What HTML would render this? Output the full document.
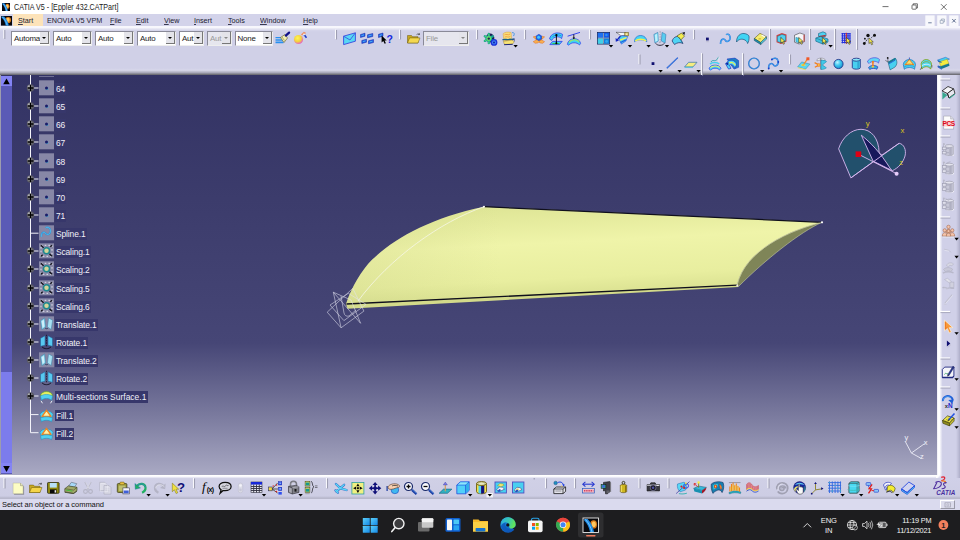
<!DOCTYPE html><html><head><meta charset="utf-8"><title>CATIA V5 - [Eppler 432.CATPart]</title><style>
*{margin:0;padding:0;box-sizing:border-box}
html,body{width:960px;height:540px;overflow:hidden;background:#d2d2e8;font-family:"Liberation Sans",sans-serif;}
.a{position:absolute}
#title{left:0;top:0;width:960px;height:15px;background:#fff}
#title .t{left:14px;top:2.2px;font-size:8.3px;color:#222;white-space:nowrap;transform:scaleX(0.86);transform-origin:0 0}
#menu{left:0;top:14.4px;width:960px;height:12px;background:#d3d3ea}
#menu span{position:absolute;top:1.7px;font-size:8px;color:#1a1a30;white-space:nowrap;transform:scaleX(0.9);transform-origin:0 0}
#menu span u{text-decoration-thickness:0.55px;text-underline-offset:0.6px;text-decoration-color:#3a3a52}
#tb{left:0;top:25.8px;width:960px;height:49.7px;background:linear-gradient(#f4f4fb 0,#fbfbfe 1.2px,#e6e6f3 2.8px,#d3d3e9 4.6px,#d0d0e7 6px,#d0d0e7 42.2px,#d8d8ea 44.2px,#a8a8b8 46.7px,#707078 48.5px,#50505e 49.7px)}
#vp{left:0;top:75px;width:936.5px;height:400px;background:linear-gradient(#333364 0,#3c3c6c 31%,#464676 67%,#7a7a9e 85%,#a9a9c3 100%);overflow:hidden}
#sb{left:1.2px;top:75.5px;width:10.8px;height:398px;background:#5a5ab6}
#rt{left:936.5px;top:75px;width:24px;height:424px;background:linear-gradient(90deg,#e8e8f2 0,#fff 1px,#fff 2.6px,#e4e4f2 4.2px,#d0d0e8 5.6px,#d0d0e8 19px,#b8b8d2 22px,#a0a0bc 24px)}
#bt{left:0;top:475px;width:938px;height:23.5px;background:linear-gradient(#fff 0,#fff 1.2px,#e8e8f4 2.4px,#d0d0e6 3.6px,#cdcde4 21px,#b8b8cc 23px)}
#bt2{left:938px;top:478px;width:22px;height:20.5px;background:linear-gradient(#d0d0e8 0,#cdcde4 18px,#b8b8cc 20px)}
#st{left:0;top:498.5px;width:960px;height:11.5px;background:#dadaee}
#st .t{left:2px;top:1.3px;font-size:7.5px;color:#111;white-space:nowrap;letter-spacing:-0.05px}
#task{left:0;top:510px;width:960px;height:30px;background:#1d1d1f}
.cb{position:absolute;top:31px;height:14.5px;background:#fff;border:1px solid #8a8a98;border-right-color:#eee;border-bottom-color:#eee;font-size:7.9px;color:#222;line-height:13.6px;padding-left:2px;overflow:hidden;white-space:nowrap;letter-spacing:-0.2px}
.cb i{position:absolute;right:0;top:0;width:9px;height:12px;background:#e4e4ea;border-right:1px solid #777;border-bottom:1px solid #777}
.cb i:after{content:"";position:absolute;left:2.2px;top:5px;border:2px solid transparent;border-top:2.5px solid #000}
.cb.d{background:#e6e6ee;color:#999}
.cb.d i:after{border-top-color:#888}
.sep{position:absolute;width:2px;background:linear-gradient(90deg,#fff 0,#fff 50%,#a8a8ba 50%)}
.tr{position:absolute;left:0;height:18px;white-space:nowrap}
.tr .lb{position:absolute;left:54.7px;top:4px;height:11.8px;padding:0 1.2px;font-size:8.45px;line-height:13.3px;color:#f0f0f8;background:#37376b;letter-spacing:-0.1px}
</style></head><body>
<div id="title" class="a"><div class="a t">CATIA V5 - [Eppler 432.CATPart]</div>
<svg class="a" style="left:1.8px;top:3px" width="8.4" height="8" viewBox="0 0 10 10" preserveAspectRatio="none"><rect width="10" height="10" fill="#08080e"/><ellipse cx="6.4" cy="4.2" rx="2.6" ry="3.2" fill="#d87818"/><ellipse cx="6.2" cy="4" rx="1.5" ry="2.2" fill="#ffc860"/><path d="M0.4 0.4L2.8 0.4C5 3 6.6 6.4 7 10L4.2 10C3.8 6.6 2.4 3.4 0.4 1.6Z" fill="#2088e0"/><path d="M1.2 0.8C3.4 3.4 5 6.6 5.6 10" stroke="#70c8ff" stroke-width="0.8" fill="none"/></svg>
<svg class="a" style="left:880px;top:0" width="80" height="15" viewBox="0 0 80 15" fill="none" stroke="#333" stroke-width="0.7"><path d="M2.5 6.6h6"/><rect x="32" y="5" width="4.2" height="4.2" rx="0.6"/><path d="M33.2 5v-1.2h4.2v4.2h-1.2"/><path d="M61 4.2l5.6 5.6M66.6 4.2l-5.6 5.6"/></svg>
</div>
<div id="menu" class="a">
<div class="a" style="left:13px;top:0;width:30px;height:12px;background:#fde3b9"></div>
<svg class="a" style="left:1px;top:1.6px" width="11.2" height="9.6" viewBox="0 0 10 10" preserveAspectRatio="none"><rect width="10" height="10" fill="#08080e"/><ellipse cx="6.4" cy="4.2" rx="2.6" ry="3.2" fill="#d87818"/><ellipse cx="6.2" cy="4" rx="1.5" ry="2.2" fill="#ffc860"/><path d="M0.4 0.4L2.8 0.4C5 3 6.6 6.4 7 10L4.2 10C3.8 6.6 2.4 3.4 0.4 1.6Z" fill="#2088e0"/><path d="M1.2 0.8C3.4 3.4 5 6.6 5.6 10" stroke="#70c8ff" stroke-width="0.8" fill="none"/></svg>
<span style="left:18px"><u>S</u>tart</span>
<span style="left:47px">ENOVIA V5 VPM</span>
<span style="left:110px"><u>F</u>ile</span>
<span style="left:136px"><u>E</u>dit</span>
<span style="left:164px"><u>V</u>iew</span>
<span style="left:194px"><u>I</u>nsert</span>
<span style="left:228px"><u>T</u>ools</span>
<span style="left:260px"><u>W</u>indow</span>
<span style="left:303px"><u>H</u>elp</span>
<svg class="a" style="left:925px;top:0.5px" width="35" height="12" viewBox="0 0 35 12"><rect x="0.3" y="0.4" width="9.3" height="11" fill="#f8f8fc"/><rect x="12.2" y="0.4" width="9.3" height="11" fill="#f8f8fc"/><rect x="24.2" y="0.4" width="9.3" height="11" fill="#f8f8fc"/><path d="M3.2 7.8h3.5" stroke="#7080a0" stroke-width="1"/><path d="M15.2 5.3h3v3h-3zM16.4 5.3v-1.3h3v3h-1.2" stroke="#8090a8" stroke-width="0.6" fill="none"/><path d="M27.2 4l3.5 3.5M30.7 4l-3.5 3.5" stroke="#607090" stroke-width="1"/></svg>
</div>
<div id="vp" class="a">
<svg class="a" style="left:0;top:0" width="936" height="400" viewBox="0 75 936 400">
<defs><linearGradient id="wg" x1="0" y1="0" x2="0.25" y2="1"><stop offset="0" stop-color="#dbe292"/><stop offset="0.45" stop-color="#eff4a9"/><stop offset="0.8" stop-color="#e8ee9f"/><stop offset="1" stop-color="#d8df8f"/></linearGradient><linearGradient id="wg2" gradientUnits="userSpaceOnUse" x1="346" y1="0" x2="500" y2="0"><stop offset="0" stop-color="#c8cf88" stop-opacity="0.3"/><stop offset="1" stop-color="#c8cf88" stop-opacity="0"/></linearGradient></defs>
<path d="M346 304 L737 285 L738.5 287 L540 298 L347.5 308.8Z" fill="#d3da8a"/>
<path d="M822 222.3 C790 230 745 250 737 285.2 L738.5 286.5 C765 260 800 232 822 222.3Z" fill="#7f8558" stroke="#d8dcae" stroke-width="0.5"/>
<path d="M346 304 C352 286 362 270 372 259.8 C395 238 430 218 484 206.7 L822 222.3 C790 230 745 250 737 285.2 Z" fill="url(#wg)"/>
<path d="M346 304 C352 286 362 270 372 259.8 C395 238 430 218 484 206.7 L822 222.3 C790 230 745 250 737 285.2 Z" fill="url(#wg2)"/>
<path d="M484 206.7 L822 222.3" stroke="#10101c" stroke-width="1.3" fill="none"/>
<path d="M346.5 304 L737 285.2" stroke="#10101c" stroke-width="1.3" fill="none"/>
<path d="M822 222.3 C790 230 745 250 737 285.2" stroke="#c4c89c" stroke-width="0.6" fill="none"/>
<path d="M484 206.7 C440 222 390 258 358 301" stroke="#f8f8f0" stroke-width="0.8" fill="none" opacity="0.9"/>
<circle cx="484" cy="206.7" r="1" fill="#fff"/><circle cx="822" cy="222.3" r="1.1" fill="#fff"/><circle cx="737.3" cy="285.5" r="1" fill="#eee"/>
<g stroke="#e4e4f2" stroke-width="0.65" fill="none" opacity="0.85"><path d="M327.2 312.2L352.8 288.3L363.9 311.1L341.1 327.8Z"/><path d="M330 305L348.3 293.3L366.1 304.4L343.9 320.6Z"/><path d="M333.3 292.2L360.6 323.3L351 300L333.3 292.2L341.1 327.8"/><path d="M341 296L344 313Q345 317 349 316L356 310"/></g>
<g stroke="#d8b8f0" stroke-width="0.9" stroke-linejoin="round">
<path d="M850.9 177.9 L838.6 148.8 C842 138 851 129.3 861 129.3 C871 129.3 879 138 879.1 153 L882 155.2 Z" fill="#22506c"/>
<path d="M873.1 161.1 L899.1 143.3 C904 144 906.5 150 905 156 C903 163 898 168 892.4 170.7 Z" fill="#22506c"/>
<path d="M861.3 135.2 C870 142 880 152 890.6 169 L892.4 170.7 L873.1 161.1 Z" fill="#18185c"/>
<path d="M850.9 177.9 L899.1 143.3 M858.3 154.1 L896.6 173.7" fill="none"/>
</g>
<rect x="855.6" y="151.4" width="5.6" height="5.6" fill="#e00014"/>
<circle cx="896.6" cy="173.7" r="2" fill="#e6ccfa"/>
<g font-family="Liberation Sans, sans-serif" font-size="7.8" fill="#d8c21c"><text x="865.8" y="126">y</text><text x="900.4" y="132.6">x</text><text x="899.2" y="165">z</text></g>
<g stroke="#ececf6" stroke-width="0.9" fill="none"><path d="M905.3 441.5 L911.4 453 L924.5 443.7 M911.4 453 L920.8 458.2"/></g>
<g font-family="Liberation Sans, sans-serif" font-size="7.5" fill="#f0f0f8"><text x="904.6" y="440">y</text><text x="923.7" y="445.3">x</text><text x="920" y="458.5">z</text></g>
<path d="M30.5 75 V432.7 H38.5 M30.5 414.6 H38.5 M30.5 233.2 H38.5" stroke="#f4f4fa" stroke-width="1" fill="none"/>
</svg>
<div class="a" style="left:39px;top:0.6px;width:15px;height:1.3px;background:#8787a6;opacity:0.7"></div>
<div class="tr" style="top:4.00px">
<svg class="a" style="left:26px;top:1px" width="30" height="16" viewBox="26 -8 30 16"><path d="M30.5 0H38.5" stroke="#f4f4fa" stroke-width="1"/><circle cx="30.5" cy="0" r="3.7" fill="#5c5c66"/><circle cx="29.9" cy="-0.7" r="2.6" fill="#8a8a94"/><circle cx="29.4" cy="-1.3" r="1.3" fill="#b4b4bc"/><path d="M27.6 0H33.4M30.5 -2.9V2.9" stroke="#000" stroke-width="1.3"/><g transform="translate(39,-7.7)"><rect x="0" y="0" width="15" height="15" fill="#8787a6"/><circle cx="7.9" cy="8.1" r="1.5" fill="#48a0c8"/><circle cx="7.5" cy="7.7" r="1.5" fill="#1c1c68"/></g></svg>
<span class="lb">64</span></div>
<div class="tr" style="top:22.14px">
<svg class="a" style="left:26px;top:1px" width="30" height="16" viewBox="26 -8 30 16"><path d="M30.5 0H38.5" stroke="#f4f4fa" stroke-width="1"/><circle cx="30.5" cy="0" r="3.7" fill="#5c5c66"/><circle cx="29.9" cy="-0.7" r="2.6" fill="#8a8a94"/><circle cx="29.4" cy="-1.3" r="1.3" fill="#b4b4bc"/><path d="M27.6 0H33.4M30.5 -2.9V2.9" stroke="#000" stroke-width="1.3"/><g transform="translate(39,-7.7)"><rect x="0" y="0" width="15" height="15" fill="#8787a6"/><circle cx="7.9" cy="8.1" r="1.5" fill="#48a0c8"/><circle cx="7.5" cy="7.7" r="1.5" fill="#1c1c68"/></g></svg>
<span class="lb">65</span></div>
<div class="tr" style="top:40.29px">
<svg class="a" style="left:26px;top:1px" width="30" height="16" viewBox="26 -8 30 16"><path d="M30.5 0H38.5" stroke="#f4f4fa" stroke-width="1"/><circle cx="30.5" cy="0" r="3.7" fill="#5c5c66"/><circle cx="29.9" cy="-0.7" r="2.6" fill="#8a8a94"/><circle cx="29.4" cy="-1.3" r="1.3" fill="#b4b4bc"/><path d="M27.6 0H33.4M30.5 -2.9V2.9" stroke="#000" stroke-width="1.3"/><g transform="translate(39,-7.7)"><rect x="0" y="0" width="15" height="15" fill="#8787a6"/><circle cx="7.9" cy="8.1" r="1.5" fill="#48a0c8"/><circle cx="7.5" cy="7.7" r="1.5" fill="#1c1c68"/></g></svg>
<span class="lb">66</span></div>
<div class="tr" style="top:58.44px">
<svg class="a" style="left:26px;top:1px" width="30" height="16" viewBox="26 -8 30 16"><path d="M30.5 0H38.5" stroke="#f4f4fa" stroke-width="1"/><circle cx="30.5" cy="0" r="3.7" fill="#5c5c66"/><circle cx="29.9" cy="-0.7" r="2.6" fill="#8a8a94"/><circle cx="29.4" cy="-1.3" r="1.3" fill="#b4b4bc"/><path d="M27.6 0H33.4M30.5 -2.9V2.9" stroke="#000" stroke-width="1.3"/><g transform="translate(39,-7.7)"><rect x="0" y="0" width="15" height="15" fill="#8787a6"/><circle cx="7.9" cy="8.1" r="1.5" fill="#48a0c8"/><circle cx="7.5" cy="7.7" r="1.5" fill="#1c1c68"/></g></svg>
<span class="lb">67</span></div>
<div class="tr" style="top:76.58px">
<svg class="a" style="left:26px;top:1px" width="30" height="16" viewBox="26 -8 30 16"><path d="M30.5 0H38.5" stroke="#f4f4fa" stroke-width="1"/><circle cx="30.5" cy="0" r="3.7" fill="#5c5c66"/><circle cx="29.9" cy="-0.7" r="2.6" fill="#8a8a94"/><circle cx="29.4" cy="-1.3" r="1.3" fill="#b4b4bc"/><path d="M27.6 0H33.4M30.5 -2.9V2.9" stroke="#000" stroke-width="1.3"/><g transform="translate(39,-7.7)"><rect x="0" y="0" width="15" height="15" fill="#8787a6"/><circle cx="7.9" cy="8.1" r="1.5" fill="#48a0c8"/><circle cx="7.5" cy="7.7" r="1.5" fill="#1c1c68"/></g></svg>
<span class="lb">68</span></div>
<div class="tr" style="top:94.72px">
<svg class="a" style="left:26px;top:1px" width="30" height="16" viewBox="26 -8 30 16"><path d="M30.5 0H38.5" stroke="#f4f4fa" stroke-width="1"/><circle cx="30.5" cy="0" r="3.7" fill="#5c5c66"/><circle cx="29.9" cy="-0.7" r="2.6" fill="#8a8a94"/><circle cx="29.4" cy="-1.3" r="1.3" fill="#b4b4bc"/><path d="M27.6 0H33.4M30.5 -2.9V2.9" stroke="#000" stroke-width="1.3"/><g transform="translate(39,-7.7)"><rect x="0" y="0" width="15" height="15" fill="#8787a6"/><circle cx="7.9" cy="8.1" r="1.5" fill="#48a0c8"/><circle cx="7.5" cy="7.7" r="1.5" fill="#1c1c68"/></g></svg>
<span class="lb">69</span></div>
<div class="tr" style="top:112.87px">
<svg class="a" style="left:26px;top:1px" width="30" height="16" viewBox="26 -8 30 16"><path d="M30.5 0H38.5" stroke="#f4f4fa" stroke-width="1"/><circle cx="30.5" cy="0" r="3.7" fill="#5c5c66"/><circle cx="29.9" cy="-0.7" r="2.6" fill="#8a8a94"/><circle cx="29.4" cy="-1.3" r="1.3" fill="#b4b4bc"/><path d="M27.6 0H33.4M30.5 -2.9V2.9" stroke="#000" stroke-width="1.3"/><g transform="translate(39,-7.7)"><rect x="0" y="0" width="15" height="15" fill="#8787a6"/><circle cx="7.9" cy="8.1" r="1.5" fill="#48a0c8"/><circle cx="7.5" cy="7.7" r="1.5" fill="#1c1c68"/></g></svg>
<span class="lb">70</span></div>
<div class="tr" style="top:131.01px">
<svg class="a" style="left:26px;top:1px" width="30" height="16" viewBox="26 -8 30 16"><path d="M30.5 0H38.5" stroke="#f4f4fa" stroke-width="1"/><circle cx="30.5" cy="0" r="3.7" fill="#5c5c66"/><circle cx="29.9" cy="-0.7" r="2.6" fill="#8a8a94"/><circle cx="29.4" cy="-1.3" r="1.3" fill="#b4b4bc"/><path d="M27.6 0H33.4M30.5 -2.9V2.9" stroke="#000" stroke-width="1.3"/><g transform="translate(39,-7.7)"><rect x="0" y="0" width="15" height="15" fill="#8787a6"/><circle cx="7.9" cy="8.1" r="1.5" fill="#48a0c8"/><circle cx="7.5" cy="7.7" r="1.5" fill="#1c1c68"/></g></svg>
<span class="lb">71</span></div>
<div class="tr" style="top:149.16px">
<svg class="a" style="left:26px;top:1px" width="30" height="16" viewBox="26 -8 30 16"><g transform="translate(39,-7.7)"><rect x="0" y="0" width="15" height="15" fill="#8787a6"/><path d="M2.4 11.6C2 6.6 5.4 6 6.8 8.2C8.2 10.6 12.2 8.6 11.4 4.6C10.8 2 8 1.4 6.6 2.6" stroke="#2890d8" stroke-width="1.5" fill="none"/><path d="M2.4 11.6C2 6.6 5.4 6 6.8 8.2C8.2 10.6 12.2 8.6 11.4 4.6C10.8 2 8 1.4 6.6 2.6" stroke="#70d8f4" stroke-width="0.5" fill="none"/></g></svg>
<span class="lb">Spline.1</span></div>
<div class="tr" style="top:167.31px">
<svg class="a" style="left:26px;top:1px" width="30" height="16" viewBox="26 -8 30 16"><path d="M30.5 0H38.5" stroke="#f4f4fa" stroke-width="1"/><circle cx="30.5" cy="0" r="3.7" fill="#5c5c66"/><circle cx="29.9" cy="-0.7" r="2.6" fill="#8a8a94"/><circle cx="29.4" cy="-1.3" r="1.3" fill="#b4b4bc"/><path d="M27.6 0H33.4M30.5 -2.9V2.9" stroke="#000" stroke-width="1.3"/><g transform="translate(39,-7.7)"><rect x="0" y="0" width="15" height="15" fill="#8787a6"/><path d="M2 2H13V13H2Z" fill="none" stroke="#eeeef6" stroke-width="0.9" stroke-dasharray="1.6 2.1"/><path d="M2 2L4.6 4.6M13 13L10.4 10.4M13 2L11.4 3.6M2 13L3.6 11.4" stroke="#101018" stroke-width="1.3"/><circle cx="7.5" cy="7.5" r="3" fill="#d4d69a" stroke="#1c8890" stroke-width="1.5"/></g></svg>
<span class="lb">Scaling.1</span></div>
<div class="tr" style="top:185.45px">
<svg class="a" style="left:26px;top:1px" width="30" height="16" viewBox="26 -8 30 16"><path d="M30.5 0H38.5" stroke="#f4f4fa" stroke-width="1"/><circle cx="30.5" cy="0" r="3.7" fill="#5c5c66"/><circle cx="29.9" cy="-0.7" r="2.6" fill="#8a8a94"/><circle cx="29.4" cy="-1.3" r="1.3" fill="#b4b4bc"/><path d="M27.6 0H33.4M30.5 -2.9V2.9" stroke="#000" stroke-width="1.3"/><g transform="translate(39,-7.7)"><rect x="0" y="0" width="15" height="15" fill="#8787a6"/><path d="M2 2H13V13H2Z" fill="none" stroke="#eeeef6" stroke-width="0.9" stroke-dasharray="1.6 2.1"/><path d="M2 2L4.6 4.6M13 13L10.4 10.4M13 2L11.4 3.6M2 13L3.6 11.4" stroke="#101018" stroke-width="1.3"/><circle cx="7.5" cy="7.5" r="3" fill="#d4d69a" stroke="#1c8890" stroke-width="1.5"/></g></svg>
<span class="lb">Scaling.2</span></div>
<div class="tr" style="top:203.60px">
<svg class="a" style="left:26px;top:1px" width="30" height="16" viewBox="26 -8 30 16"><path d="M30.5 0H38.5" stroke="#f4f4fa" stroke-width="1"/><circle cx="30.5" cy="0" r="3.7" fill="#5c5c66"/><circle cx="29.9" cy="-0.7" r="2.6" fill="#8a8a94"/><circle cx="29.4" cy="-1.3" r="1.3" fill="#b4b4bc"/><path d="M27.6 0H33.4M30.5 -2.9V2.9" stroke="#000" stroke-width="1.3"/><g transform="translate(39,-7.7)"><rect x="0" y="0" width="15" height="15" fill="#8787a6"/><path d="M2 2H13V13H2Z" fill="none" stroke="#eeeef6" stroke-width="0.9" stroke-dasharray="1.6 2.1"/><path d="M2 2L4.6 4.6M13 13L10.4 10.4M13 2L11.4 3.6M2 13L3.6 11.4" stroke="#101018" stroke-width="1.3"/><circle cx="7.5" cy="7.5" r="3" fill="#d4d69a" stroke="#1c8890" stroke-width="1.5"/></g></svg>
<span class="lb">Scaling.5</span></div>
<div class="tr" style="top:221.74px">
<svg class="a" style="left:26px;top:1px" width="30" height="16" viewBox="26 -8 30 16"><path d="M30.5 0H38.5" stroke="#f4f4fa" stroke-width="1"/><circle cx="30.5" cy="0" r="3.7" fill="#5c5c66"/><circle cx="29.9" cy="-0.7" r="2.6" fill="#8a8a94"/><circle cx="29.4" cy="-1.3" r="1.3" fill="#b4b4bc"/><path d="M27.6 0H33.4M30.5 -2.9V2.9" stroke="#000" stroke-width="1.3"/><g transform="translate(39,-7.7)"><rect x="0" y="0" width="15" height="15" fill="#8787a6"/><path d="M2 2H13V13H2Z" fill="none" stroke="#eeeef6" stroke-width="0.9" stroke-dasharray="1.6 2.1"/><path d="M2 2L4.6 4.6M13 13L10.4 10.4M13 2L11.4 3.6M2 13L3.6 11.4" stroke="#101018" stroke-width="1.3"/><circle cx="7.5" cy="7.5" r="3" fill="#d4d69a" stroke="#1c8890" stroke-width="1.5"/></g></svg>
<span class="lb">Scaling.6</span></div>
<div class="tr" style="top:239.88px">
<svg class="a" style="left:26px;top:1px" width="30" height="16" viewBox="26 -8 30 16"><path d="M30.5 0H38.5" stroke="#f4f4fa" stroke-width="1"/><circle cx="30.5" cy="0" r="3.7" fill="#5c5c66"/><circle cx="29.9" cy="-0.7" r="2.6" fill="#8a8a94"/><circle cx="29.4" cy="-1.3" r="1.3" fill="#b4b4bc"/><path d="M27.6 0H33.4M30.5 -2.9V2.9" stroke="#000" stroke-width="1.3"/><g transform="translate(39,-7.7)"><rect x="0" y="0" width="15" height="15" fill="#8787a6"/><path d="M1.6 4.4L5.6 1.6L6.6 10.6L3 13.4Z" fill="#8cd8ee" stroke="#3880a8" stroke-width="0.5"/><path d="M2.6 5L4.8 3.4L5.4 10L3.6 11.6Z" fill="#d0f0fa"/><path d="M9.6 1.6L13.6 4L12.2 13.2L8.4 10.6Z" fill="#a8e0f2" stroke="#3880a8" stroke-width="0.5"/><path d="M6 11.6C7 12.6 8 12.6 9 11.8" stroke="#203050" stroke-width="0.8" fill="none"/></g></svg>
<span class="lb">Translate.1</span></div>
<div class="tr" style="top:258.03px">
<svg class="a" style="left:26px;top:1px" width="30" height="16" viewBox="26 -8 30 16"><path d="M30.5 0H38.5" stroke="#f4f4fa" stroke-width="1"/><circle cx="30.5" cy="0" r="3.7" fill="#5c5c66"/><circle cx="29.9" cy="-0.7" r="2.6" fill="#8a8a94"/><circle cx="29.4" cy="-1.3" r="1.3" fill="#b4b4bc"/><path d="M27.6 0H33.4M30.5 -2.9V2.9" stroke="#000" stroke-width="1.3"/><g transform="translate(39,-7.7)"><path d="M1.5 4 L6 1.5 L6 11 L1.5 12Z" fill="#58c8f0" stroke="#1a5a90" stroke-width="0.5"/><path d="M9 1.5 L13.5 4 L13.5 12 L9 11Z" fill="#58c8f0" stroke="#1a5a90" stroke-width="0.5"/><path d="M7.5 0.5 V13" stroke="#101020" stroke-width="0.7" stroke-dasharray="1.5 1"/><path d="M3 12.5 C5 15 10 15 12 12.5" stroke="#101020" stroke-width="0.9" fill="none"/></g></svg>
<span class="lb">Rotate.1</span></div>
<div class="tr" style="top:276.18px">
<svg class="a" style="left:26px;top:1px" width="30" height="16" viewBox="26 -8 30 16"><path d="M30.5 0H38.5" stroke="#f4f4fa" stroke-width="1"/><circle cx="30.5" cy="0" r="3.7" fill="#5c5c66"/><circle cx="29.9" cy="-0.7" r="2.6" fill="#8a8a94"/><circle cx="29.4" cy="-1.3" r="1.3" fill="#b4b4bc"/><path d="M27.6 0H33.4M30.5 -2.9V2.9" stroke="#000" stroke-width="1.3"/><g transform="translate(39,-7.7)"><rect x="0" y="0" width="15" height="15" fill="#8787a6"/><path d="M1.6 4.4L5.6 1.6L6.6 10.6L3 13.4Z" fill="#8cd8ee" stroke="#3880a8" stroke-width="0.5"/><path d="M2.6 5L4.8 3.4L5.4 10L3.6 11.6Z" fill="#d0f0fa"/><path d="M9.6 1.6L13.6 4L12.2 13.2L8.4 10.6Z" fill="#a8e0f2" stroke="#3880a8" stroke-width="0.5"/><path d="M6 11.6C7 12.6 8 12.6 9 11.8" stroke="#203050" stroke-width="0.8" fill="none"/></g></svg>
<span class="lb">Translate.2</span></div>
<div class="tr" style="top:294.32px">
<svg class="a" style="left:26px;top:1px" width="30" height="16" viewBox="26 -8 30 16"><path d="M30.5 0H38.5" stroke="#f4f4fa" stroke-width="1"/><circle cx="30.5" cy="0" r="3.7" fill="#5c5c66"/><circle cx="29.9" cy="-0.7" r="2.6" fill="#8a8a94"/><circle cx="29.4" cy="-1.3" r="1.3" fill="#b4b4bc"/><path d="M27.6 0H33.4M30.5 -2.9V2.9" stroke="#000" stroke-width="1.3"/><g transform="translate(39,-7.7)"><path d="M1.5 4 L6 1.5 L6 11 L1.5 12Z" fill="#58c8f0" stroke="#1a5a90" stroke-width="0.5"/><path d="M9 1.5 L13.5 4 L13.5 12 L9 11Z" fill="#58c8f0" stroke="#1a5a90" stroke-width="0.5"/><path d="M7.5 0.5 V13" stroke="#101020" stroke-width="0.7" stroke-dasharray="1.5 1"/><path d="M3 12.5 C5 15 10 15 12 12.5" stroke="#101020" stroke-width="0.9" fill="none"/></g></svg>
<span class="lb">Rotate.2</span></div>
<div class="tr" style="top:312.46px">
<svg class="a" style="left:26px;top:1px" width="30" height="16" viewBox="26 -8 30 16"><path d="M30.5 0H38.5" stroke="#f4f4fa" stroke-width="1"/><circle cx="30.5" cy="0" r="3.7" fill="#5c5c66"/><circle cx="29.9" cy="-0.7" r="2.6" fill="#8a8a94"/><circle cx="29.4" cy="-1.3" r="1.3" fill="#b4b4bc"/><path d="M27.6 0H33.4M30.5 -2.9V2.9" stroke="#000" stroke-width="1.3"/><g transform="translate(39,-7.7)"><path d="M1.5 7 C3 2 12 2 13.5 7 L11 9 C10 6.5 5 6.5 4 9Z" fill="#e8f060" stroke="#50a020" stroke-width="0.6"/><path d="M1.5 8 C4 5.5 11 5.5 13.5 8 L12.5 12 C10.5 9.5 4.5 9.5 2.5 12Z" fill="#50d0f0" stroke="#1890c0" stroke-width="0.5"/><path d="M2 12.5 L3.5 15 M13 12.5 L11.5 15" stroke="#e8e8f0" stroke-width="1"/></g></svg>
<span class="lb" style="letter-spacing:0.02px">Multi-sections Surface.1</span></div>
<div class="tr" style="top:330.61px">
<svg class="a" style="left:26px;top:1px" width="30" height="16" viewBox="26 -8 30 16"><g transform="translate(39,-7.7)"><path d="M1 7 C3 2.5 12 2.5 14 7 L13 10.5 L2 10.5Z" fill="#50d0f0" stroke="#1890c0" stroke-width="0.5"/><path d="M7.5 3 L12 9.2 L3 9.2Z" fill="#fff2a8" stroke="#f08420" stroke-width="1.3" stroke-linejoin="round"/><path d="M1.5 11 C4 9 11 9 13.5 11 L12.5 14.5 C10.5 12.5 4.5 12.5 2.5 14.5Z" fill="#50d0f0" stroke="#1890c0" stroke-width="0.5"/></g></svg>
<span class="lb">Fill.1</span></div>
<div class="tr" style="top:348.75px">
<svg class="a" style="left:26px;top:1px" width="30" height="16" viewBox="26 -8 30 16"><g transform="translate(39,-7.7)"><path d="M1 7 C3 2.5 12 2.5 14 7 L13 10.5 L2 10.5Z" fill="#50d0f0" stroke="#1890c0" stroke-width="0.5"/><path d="M7.5 3 L12 9.2 L3 9.2Z" fill="#fff2a8" stroke="#f08420" stroke-width="1.3" stroke-linejoin="round"/><path d="M1.5 11 C4 9 11 9 13.5 11 L12.5 14.5 C10.5 12.5 4.5 12.5 2.5 14.5Z" fill="#50d0f0" stroke="#1890c0" stroke-width="0.5"/></g></svg>
<span class="lb">Fill.2</span></div>
</div>
<div class="a" style="left:0;top:75px;width:1.3px;height:400px;background:#9c9cae"></div>
<div id="sb" class="a"><div class="a" style="left:0;top:0;width:10.8px;height:10.3px;background:#8484f4"></div><div class="a" style="left:0;top:296.5px;width:10.8px;height:91px;background:#7c7cec"></div><div class="a" style="left:0;top:387.5px;width:10.8px;height:10.3px;background:#8484f4"></div><svg class="a" style="left:0;top:0" width="12" height="398" viewBox="0 0 12 398"><path d="M2.2 8.3L5.5 2.4L8.8 8.3Z" fill="#000"/><path d="M2.2 390L5.5 396L8.8 390Z" fill="#000"/></svg></div>
<div id="tb" class="a"></div>
<div class="cb" style="left:11px;width:38.5px">Automatic<i></i></div>
<div class="cb" style="left:53px;width:38.5px">Auto<i></i></div>
<div class="cb" style="left:95px;width:38.5px">Auto<i></i></div>
<div class="cb" style="left:137px;width:38.5px">Auto<i></i></div>
<div class="cb" style="left:179px;width:24.5px">Aut<i></i></div>
<div class="cb d" style="left:207px;width:24.5px">Aut<i></i></div>
<div class="cb" style="left:234.5px;width:38.5px">None<i></i></div>
<div class="cb d" style="left:423px;width:46px">File<i></i></div>
<div id="rt" class="a"></div>
<div id="bt" class="a"></div><div id="bt2" class="a"></div><div class="a" style="left:936px;top:475px;width:5px;height:3px;background:linear-gradient(135deg,#fff 0,#fff 45%,#e0e0f0 70%,#d0d0e8 100%)"></div>
<div id="st" class="a"><div class="a t">Select an object or a command</div><div class="a" style="left:939.5px;top:1.5px;width:15.5px;height:8.5px;background:#dcdcec;border:1px solid #fff;border-right-color:#9a9aa8;border-bottom-color:#9a9aa8"></div><svg class="a" style="left:944px;top:3px" width="8" height="6" viewBox="0 0 8 6"><rect x="1" y="0.8" width="5.6" height="4.2" fill="none" stroke="#a0a0b0" stroke-width="0.7"/><circle cx="3.8" cy="2.9" r="1.1" fill="none" stroke="#a8a8b8" stroke-width="0.6"/></svg></div>
<div id="task" class="a"><svg class="a" style="left:0;top:0" width="960" height="30" viewBox="0 510 960 30">
<defs><linearGradient id="wl" x1="0" y1="0" x2="1" y2="1"><stop offset="0" stop-color="#5cd0fa"/><stop offset="1" stop-color="#1488e6"/></linearGradient><linearGradient id="eg" x1="0.2" y1="0" x2="0.7" y2="1"><stop offset="0" stop-color="#2ea8ea"/><stop offset="0.5" stop-color="#1478d4"/><stop offset="1" stop-color="#0c52b4"/></linearGradient><linearGradient id="eg2" x1="0" y1="0" x2="1" y2="0.3"><stop offset="0" stop-color="#2cb0e4"/><stop offset="0.55" stop-color="#38c8b0"/><stop offset="1" stop-color="#62e458"/></linearGradient></defs>
<g fill="url(#wl)"><rect x="362.8" y="518" width="7" height="7" rx="0.5"/><rect x="370.7" y="518" width="7" height="7" rx="0.5"/><rect x="362.8" y="525.8" width="7" height="7" rx="0.5"/><rect x="370.7" y="525.8" width="7" height="7" rx="0.5"/></g>
<circle cx="398.8" cy="523.6" r="5.2" fill="#3c3c3e" stroke="#f2f2f2" stroke-width="1.4"/><path d="M395.2 527.6L391.8 531.6" stroke="#f2f2f2" stroke-width="1.6" stroke-linecap="round"/>
<rect x="418" y="522" width="11.5" height="9.5" rx="1" fill="#6a6a6a"/><rect x="421.8" y="518.2" width="11.5" height="9.5" rx="1" fill="#c8c8c8"/><rect x="421.8" y="518.2" width="11.5" height="4" rx="1" fill="#f4f4f4"/>
<rect x="445.5" y="518" width="15" height="13.7" rx="1.5" fill="#0f5fd0"/><rect x="447" y="519.6" width="5" height="10.6" rx="0.6" fill="#f8f8f8"/><rect x="453.5" y="519.6" width="5.5" height="4.6" rx="0.5" fill="#4cc8f6"/><rect x="453.5" y="525.3" width="5.5" height="4.9" rx="0.5" fill="#28a4f0"/>
<path d="M473 519.5h5.5l1.5 1.6h8v10.4h-15z" fill="#f7b928"/><path d="M473 522h15v9.5h-15z" fill="#fbd045"/><rect x="475.6" y="528" width="9.8" height="3.5" rx="0.7" fill="#1674d0"/>
<circle cx="508" cy="525" r="7.7" fill="url(#eg)"/><path d="M501.4 521.2C503.4 517.6 507.6 516.6 511 517.9C514.4 519.2 516.2 522.4 515.5 525.6C514.9 528 512.6 529 510.6 528.4C509.2 528 508.8 526.8 509.3 525.8C509.6 523.4 507 521.6 504.4 522.4C503 522.8 502 523.8 501.4 525.2Z" fill="url(#eg2)"/><circle cx="507.8" cy="524.9" r="1.6" fill="#121216"/><path d="M516.2 526.4L512.6 528.6L516 530Z" fill="#1d1d1f"/><path d="M501 526.6C502 530.6 506 532.6 509.6 531.8C511.6 531.4 513 530.4 514 529.2C511 530 507.6 529.4 506 526.8C505 525.2 505.2 523.6 505.8 522.6C503.4 522.8 501.4 524.4 501 526.6Z" fill="#0d56b6" opacity="0.75"/>
<path d="M531.5 521v-1.2q0-1.6 1.6-1.6h4.3q1.6 0 1.6 1.6v1.2" stroke="#2aa4e8" stroke-width="1.1" fill="none"/><rect x="528" y="520.4" width="14.6" height="11.8" rx="1.8" fill="#f4f4f4"/><rect x="532" y="523" width="3" height="3" fill="#f25022"/><rect x="535.7" y="523" width="3" height="3" fill="#7fba00"/><rect x="532" y="526.7" width="3" height="3" fill="#00a4ef"/><rect x="535.7" y="526.7" width="3" height="3" fill="#ffb900"/>
<circle cx="563" cy="524.7" r="7" fill="#e8453c"/><path d="M563 524.7L556.9 521.2A7 7 0 0 0 563.3 531.7Z" fill="#34a853"/><path d="M563 524.7L563.3 531.7A7 7 0 0 0 569.1 521.2Z" fill="#fbc116"/><path d="M556.9 521.2A7 7 0 0 1 569.1 521.2L563 521.2Z" fill="#e8453c"/><circle cx="563" cy="524.7" r="3.3" fill="#f4f4f4"/><circle cx="563" cy="524.7" r="2.5" fill="#4285f4"/>
<rect x="578" y="512.5" width="25.5" height="25" rx="2.5" fill="#2e2e30"/><rect x="583" y="518" width="15.5" height="14.5" fill="#08080c" stroke="#e8e8e8" stroke-width="0.9"/><ellipse cx="593.6" cy="524.4" rx="3.4" ry="4.2" fill="#d87818"/><ellipse cx="593.8" cy="524.2" rx="2" ry="2.8" fill="#ffc860"/><path d="M584.2 519L587.6 519C591 522.6 593.2 527 594 532L590 532C589.2 527.6 587 523.2 584.2 520.6Z" fill="#2088e0"/><path d="M585.4 519.4C588.6 523 591 527.4 592 532" stroke="#70c8ff" stroke-width="1" fill="none"/><rect x="586" y="535" width="9.6" height="1.6" rx="0.8" fill="#f0795a"/>
<path d="M803.5 527.3L807.3 523.5L811.1 527.3" stroke="#e8e8e8" stroke-width="0.9" fill="none"/>
<g font-family="Liberation Sans, sans-serif" font-size="7.6" fill="#f2f2f2" letter-spacing="-0.2"><text x="828.7" y="523" text-anchor="middle">ENG</text><text x="828.7" y="533" text-anchor="middle">IN</text><text x="931.3" y="523" text-anchor="end" font-size="7.3">11:19 PM</text><text x="931.3" y="533" text-anchor="end" font-size="7.4">11/12/2021</text></g>
<g stroke="#e8e8e8" stroke-width="0.8" fill="none"><circle cx="852" cy="525" r="4.6"/><ellipse cx="852" cy="525" rx="2" ry="4.6"/><path d="M847.4 525h9.2M848.2 522.6h7.6M848.2 527.4h7.6"/></g><circle cx="855" cy="527.6" r="2.4" fill="#1d1d1f" stroke="#e8e8e8" stroke-width="0.7"/><path d="M853.4 529.2l3.2-3.2" stroke="#e8e8e8" stroke-width="0.7"/>
<path d="M862.6 523.6h1.8l2.6-2.4v7.6l-2.6-2.4h-1.8z" fill="none" stroke="#e8e8e8" stroke-width="0.8" stroke-linejoin="round"/><path d="M868.4 523.2q1.2 1.8 0 3.6M869.9 521.9q2 3.1 0 6.2M871.4 520.7q2.8 4.3 0 8.6" stroke="#e8e8e8" stroke-width="0.7" fill="none"/>
<rect x="878.4" y="522.2" width="7.8" height="5.4" rx="1.2" fill="#5a5a5c" stroke="#ececec" stroke-width="0.8"/><rect x="879.2" y="523" width="3.4" height="3.8" fill="#e0e0e0"/><path d="M887 523.8v2.2" stroke="#ececec" stroke-width="0.9"/><path d="M876.2 525l3.3-3.2v2h2.2l-3.5 4v-2.8z" fill="#f0f0f0" stroke="#1d1d1f" stroke-width="0.4"/>
<circle cx="943.4" cy="525" r="4.9" fill="#f2805e"/><text x="943.4" y="527.7" text-anchor="middle" font-family="Liberation Sans, sans-serif" font-size="7.4" font-weight="bold" fill="#1d1d1f">1</text>
</svg></div>
<svg class="a" style="left:0;top:0;pointer-events:none" width="960" height="540" viewBox="0 0 960 540" font-family="Liberation Sans, sans-serif">
<path d="M3.8 29.5v9" stroke="#f8f8fc" stroke-width="1.1"/><path d="M4.85 30.0v9" stroke="#9c9cb0" stroke-width="1"/>
<g transform="translate(275.5,32)"><path d="M0 5.5h8M0 7.2h9M0 8.9h9M0 10.6h8" stroke="#2890f0" stroke-width="1.1"/><path d="M5 5.5L9.5 2.5L12 6L8.5 10.5Z" fill="#f4f0b0" stroke="#605820" stroke-width="0.6"/><path d="M6.5 5L9 8.5" stroke="#807830" stroke-width="0.6"/><path d="M10.3 3.6L13.6 0.6" stroke="#101088" stroke-width="2.2" stroke-linecap="round"/></g>
<g transform="translate(293.5,31.5)"><defs><radialGradient id="bg1" cx="0.4" cy="0.35" r="0.7"><stop offset="0" stop-color="#fff850"/><stop offset="0.55" stop-color="#f4d040"/><stop offset="1" stop-color="#e050d8"/></radialGradient></defs><circle cx="5" cy="8" r="4.6" fill="url(#bg1)"/><path d="M8 3.5L10.5 1.2L12 2" stroke="#f09060" stroke-width="1.6" fill="none"/><path d="M10.5 3L13 6.2" stroke="#1838c8" stroke-width="1.5"/><path d="M10 2.2L11.2 3.6" stroke="#f4f4f4" stroke-width="1.4"/></g>
<path d="M335.5 29.5v9.5" stroke="#f8f8fc" stroke-width="1.1"/><path d="M336.55 30.0v9.5" stroke="#9c9cb0" stroke-width="1"/>
<g transform="translate(343,32)"><path d="M0.6 4.2L12.4 0.8L12.4 9.2L0.6 12.6Z" fill="#58d8f4" stroke="#3848e0" stroke-width="0.9" stroke-linejoin="round"/><path d="M0.6 4.2L7 8L12.4 0.8" fill="none" stroke="#3848e0" stroke-width="0.8"/></g>
<g transform="translate(360,32)"><g fill="#2060e8" stroke="#1020a0" stroke-width="0.5"><path d="M0.5 2.5L5 1.2V4.2L0.5 5.5Z"/><path d="M7.5 2.8L12.8 1.5V4.5L7.5 5.8Z"/><path d="M1.8 8.5L6.5 7.2V10.2L1.8 11.5Z"/><path d="M8.5 8.8L13.5 7.5V10.5L8.5 11.8Z"/></g><g stroke="#60d0f8" stroke-width="0.7"><path d="M1.5 3.6L4 2.9M8.5 3.9L11.6 3.1M2.8 9.6L5.4 8.9M9.5 9.9L12.4 9.2"/></g></g>
<g transform="translate(378,32)"><path d="M0.5 2.3L5 1V4.2L0.5 5.5Z" fill="#2060e8" stroke="#1020a0" stroke-width="0.5"/><path d="M1.5 3.6L4 2.9" stroke="#60d0f8" stroke-width="0.7"/><path d="M3.6 3.6L3.6 10.4L5.3 8.9L6.6 11.8L7.9 11.2L6.6 8.4L8.7 8.4Z" fill="#000"/><text x="8.4" y="11" font-size="10.5" font-weight="bold" fill="#1828e0">?</text></g>
<path d="M399.5 29.5v9.5" stroke="#f8f8fc" stroke-width="1.1"/><path d="M400.55 30.0v9.5" stroke="#9c9cb0" stroke-width="1"/>
<g transform="translate(407,32.5)"><path d="M0.5 3h4l1 1.2h5.5v6.3h-10.5z" fill="#c8a820" stroke="#6a5808" stroke-width="0.5"/><path d="M0.5 10.5L2.6 5.4H13L11 10.5Z" fill="#f4d850" stroke="#6a5808" stroke-width="0.5"/><path d="M9.5 2.2q1.5-1.8 3-0.2M12.5 2l-0.2-1.4M12.5 2l-1.4 0.1" stroke="#303030" stroke-width="0.6" fill="none"/></g>
<path d="M476.5 29.5v9.5" stroke="#f8f8fc" stroke-width="1.1"/><path d="M477.55 30.0v9.5" stroke="#9c9cb0" stroke-width="1"/>
<g transform="translate(484,32)"><g transform="translate(4.8,6.6)"><circle r="4.4" cx="1.2" cy="-0.6" fill="#182058"/><g stroke="#18a090" stroke-width="2.3" stroke-linecap="round"><path d="M0 -4.6V4.6M-4 -2.3L4 2.3M-4 2.3L4 -2.3"/></g><g stroke="#58e070" stroke-width="0.9" stroke-linecap="round"><path d="M0 -4.6V-2.6M-4 -2.3L-2.2 -1.3M-4 2.3L-2.2 1.3M0 4.6V3"/></g><circle r="3.2" fill="#28b890"/><circle r="2.3" fill="#70e060"/><circle r="1.2" fill="#182858"/></g><circle cx="10" cy="10.4" r="3.4" fill="#1830d8"/><circle cx="10" cy="10.4" r="2.1" fill="#4080f8"/><circle cx="10" cy="10.4" r="1" fill="#1020a0"/></g>
<g transform="translate(501.5,31.5)"><path d="M1.6 2.2C3 0.6 7 0.2 9.6 1L10.2 8.4L2.4 9.4Z" fill="#f8dc78" stroke="#d8a040" stroke-width="0.5"/><path d="M3 3.4C4.6 2 6.4 4.2 8.6 2.6M3.2 5.6C5 4.4 6.6 6.4 8.8 5" stroke="#f0a040" stroke-width="0.9" fill="none"/><path d="M10.6 1.2C12.6 0.4 13.4 2.6 12 4.6" stroke="#3890e0" stroke-width="0.9" fill="none"/><path d="M1 8.6C3 6.8 5 8.8 7 8C9 7.2 10.6 8.6 12.4 7.4" stroke="#186088" stroke-width="1.3" fill="none"/><path d="M1.8 9.8L10.6 8.6L12.8 10.2L11 12.6L3 13Z" fill="#f8e478" stroke="#8a7020" stroke-width="0.4"/><path d="M2.6 13.2L11.2 12.8" stroke="#202878" stroke-width="1"/><path d="M10.6 8.4L13 7.2L12.8 10" fill="none" stroke="#304080" stroke-width="0.6"/></g>
<path d="M513.4 45.0h4.4l-2.2 2.6z" fill="#000"/>
<path d="M524.5 29.5v9.5" stroke="#f8f8fc" stroke-width="1.1"/><path d="M525.55 30.0v9.5" stroke="#9c9cb0" stroke-width="1"/>
<g transform="translate(532,33.5)"><path d="M1.2 3.4L3.2 2.8L12.6 8.2L10.6 9.8L8 9.4Z" fill="#f8b050" stroke="#e06820" stroke-width="0.5"/><path d="M12.6 3.4L10.6 2.8L1.2 8.2L3.2 9.8L5.8 9.4Z" fill="#f8b050" stroke="#e06820" stroke-width="0.5"/><path d="M6.9 0.8L9.6 2.4V5.6L6.9 7.2L4.2 5.6V2.4Z" fill="#1868f0" stroke="#1030c0" stroke-width="0.5"/><circle cx="6.6" cy="3.8" r="1.5" fill="#40c8ff"/></g>
<g transform="translate(549,32)"><path d="M0.6 7C1.2 1.4 9 -0.8 13.6 2.4L12.6 6.6C10 3.6 4.6 4.4 2.6 8.4Z" fill="#40d4f0" stroke="#3040f0" stroke-width="0.8"/><path d="M3 5.4C5 2.6 9.4 2.2 12 3.8" stroke="#2090e8" stroke-width="1" fill="none"/><path d="M0.8 12.6L3.6 9.4H13.2L10.4 12.6Z" fill="#40d4f0" stroke="#3040f0" stroke-width="0.8"/><path d="M3.4 11.6H10.4" stroke="#30c060" stroke-width="1.2"/><path d="M7.4 3V11.4" stroke="#000" stroke-width="0.9"/><circle cx="7.4" cy="3.2" r="1.1" fill="#000"/><circle cx="7.4" cy="11.2" r="1" fill="#000"/></g>
<g transform="translate(567,32)"><path d="M0.6 4.2L13 0.4" stroke="#3848f0" stroke-width="1"/><path d="M0.4 12.4C1 5.4 12.4 4.6 13.6 11.4L12.4 13C10 10 4 10 1.8 13.2Z" fill="#40d4f0" stroke="#3848f0" stroke-width="0.8"/><path d="M2 10.4C4 7 10 7 12.2 9.8" stroke="#a0e860" stroke-width="1.1" fill="none"/><path d="M6.8 2.4V6.4" stroke="#000" stroke-width="0.8"/><path d="M5.6 5.4L6.8 7.2L8 5.4Z" fill="#000"/></g>
<path d="M589.5 29.5v9.5" stroke="#f8f8fc" stroke-width="1.1"/><path d="M590.55 30.0v9.5" stroke="#9c9cb0" stroke-width="1"/>
<g transform="translate(597,32)"><rect x="0" y="0" width="13" height="12.5" fill="#182860"/><rect x="0.8" y="0.8" width="11.4" height="10.9" fill="#8898b0"/><rect x="0.8" y="0.8" width="5.2" height="4.8" fill="#2070f0"/><rect x="7" y="0.8" width="5.2" height="4.8" fill="#1858e8"/><rect x="0.8" y="6.6" width="5.2" height="5.1" fill="#40d0e8"/><rect x="7" y="6.6" width="5.2" height="5.1" fill="#1080e0"/><circle cx="9.4" cy="3" r="1.3" fill="#2890f8"/><circle cx="9.6" cy="9.4" r="1.4" fill="#30a8f0"/></g>
<path d="M608.8 45.0h4.4l-2.2 2.6z" fill="#000"/>
<g transform="translate(615,31.5)"><path d="M1 0.8L11 1.2L12.6 3.6L6 4.2Z" fill="#f8f8f8" stroke="#303038" stroke-width="0.5"/><rect x="9.8" y="1" width="3.6" height="3.4" fill="#d8c468" stroke="#605010" stroke-width="0.5"/><rect x="10.8" y="2" width="1.6" height="1.4" fill="#f4f0c0"/><path d="M3.6 6.4L7 4.2L12.6 5L11 9.4L6.4 12.6Z" fill="#48d4f4" stroke="#2848e0" stroke-width="0.6"/><path d="M5 8.6L11.6 6.2" stroke="#f0f060" stroke-width="1.3"/><path d="M5.6 11L10.8 8.4" stroke="#2060e0" stroke-width="1.2"/><path d="M5.4 4.6L1.4 9.4" stroke="#1828c0" stroke-width="1.4"/><path d="M0.6 6.6L0.8 10.2L4 9Z" fill="#1828c0"/></g>
<path d="M627.8 45.0h4.4l-2.2 2.6z" fill="#000"/>
<g transform="translate(634,33)"><path d="M0.5 8.8C0.2 0.4 13 0.4 12.8 8.8C10 6.2 3.4 6.2 0.5 8.8Z" fill="#48d4f4" stroke="#2870d0" stroke-width="0.7" stroke-linejoin="round"/><path d="M1.2 8C4 5.6 9.4 5.6 12.2 8" stroke="#f0f050" stroke-width="1.5" fill="none"/></g>
<path d="M646.4 45.0h4.4l-2.2 2.6z" fill="#000"/>
<g transform="translate(652.5,31)"><path d="M1.4 3.4L5.4 1.4L6 10L2.4 12Z" fill="#78dcf4" stroke="#3878b0" stroke-width="0.6"/><path d="M2.4 4L4.6 2.8L5 9.6L3 10.8Z" fill="#c0f0fc"/><path d="M9.6 1.4L13.4 3.4L12.6 12L8.8 10Z" fill="#58cdf0" stroke="#3878b0" stroke-width="0.6"/><path d="M7.4 0.2V12" stroke="#70707c" stroke-width="0.8" stroke-dasharray="1.6 0.9"/><path d="M6.7 0.2V11" stroke="#f4f4f8" stroke-width="0.6"/><path d="M3.2 12.4C5 15 10 15 11.8 12.4" stroke="#202030" stroke-width="0.9" fill="none"/></g>
<path d="M664.8 45.0h4.4l-2.2 2.6z" fill="#000"/>
<g transform="translate(671.5,31.5)"><path d="M0.6 9.5C2 5.5 5 4.5 7.5 5.2L11.5 12C9 10.5 5.5 11 3 13Z" fill="#50d4f4" stroke="#202860" stroke-width="0.7"/><path d="M5.5 4.4L10 1.6L13 4.6L9.4 8.4Z" fill="#f4ec50" stroke="#404010" stroke-width="0.6"/><path d="M10.6 1.2L13.4 0.6L13 3.4Z" fill="#101010"/><path d="M7.4 5.4L11 11.4" stroke="#207898" stroke-width="0.6"/></g>
<path d="M693.5 29.5v9.5" stroke="#f8f8fc" stroke-width="1.1"/><path d="M694.55 30.0v9.5" stroke="#9c9cb0" stroke-width="1"/>
<g transform="translate(706,37.6)"><rect x="0" y="0" width="2.8" height="2.8" fill="#101070"/><rect x="0.3" y="3.6" width="2.4" height="1" fill="#b8b8cc"/></g>
<g transform="translate(719.5,32.5)"><path d="M1 11.5C1 6 4.5 5.5 6 8C7.5 10.5 11.5 8 10.5 4C9.8 1.5 7.5 1.2 6.6 2.2" stroke="#2870e0" stroke-width="1.5" fill="none"/><path d="M1 11.5C1 6 4.5 5.5 6 8C7.5 10.5 11.5 8 10.5 4C9.8 1.5 7.5 1.2 6.6 2.2" stroke="#58d4f4" stroke-width="0.6" fill="none"/></g>
<g transform="translate(736,32.5)"><path d="M0.5 9.5C0.5 3 5 0.6 8 1C10.5 1.2 12.5 2.4 13 3.6C13.4 6.5 12.6 9.4 11.6 11C11 8 7.6 6.2 4.6 6.8C2.8 7.2 1.4 8.2 0.5 9.5Z" fill="#40d4f4" stroke="#205078" stroke-width="0.7"/></g>
<g transform="translate(753.5,32.5)"><path d="M0.8 6L6.5 0.8L13 4.4L7.2 10Z" fill="#f4ec70" stroke="#605818" stroke-width="0.6"/><path d="M0.8 6L7.2 10V12L0.8 8Z" fill="#2090b0" stroke="#104050" stroke-width="0.5"/><path d="M7.2 10L13 4.4V6.6L7.2 12Z" fill="#58d0e8" stroke="#104050" stroke-width="0.5"/><path d="M8 2.5L11.5 4.5" stroke="#f8f8f8" stroke-width="1.2"/><path d="M5 5.5h2.4v1.6h-2.4z" fill="#d8c040"/></g>
<path d="M769.5 28.5v21" stroke="#f8f8fc" stroke-width="1.1"/><path d="M770.55 29.0v21" stroke="#9c9cb0" stroke-width="1"/>
<g transform="translate(775.5,32)"><path d="M1 3.2L6.4 1L11 2.6V9.6L5.6 12L1 10.2Z" fill="#d04040" /><path d="M2 4.4L6.4 2.4L10 3.6V9L5.8 10.8L2 9.4Z" fill="#50d0f0" stroke="#1880a0" stroke-width="0.5"/><path d="M5.8 5.4V10.8" stroke="#1880a0" stroke-width="0.5"/><g transform="translate(5.2,5.4) scale(0.82)"><path d="M0 0L0 7L1.8 5.4L3.2 8.4L4.6 7.8L3.2 4.9L5.4 4.9Z" fill="#f4e850" stroke="#202020" stroke-width="0.6"/></g></g>
<g transform="translate(793.5,32)"><path d="M1 3.2L6.4 1L11 2.6V9.6L5.6 12L1 10.2Z" fill="#f4f4f8" stroke="#404048" stroke-width="0.6"/><path d="M10 3L11 2.6V9.6L10 10Z" fill="#d04040"/><path d="M2.4 5.4L5.8 6.4V11L2.4 9.8Z" fill="#50d0f0" stroke="#1880a0" stroke-width="0.5"/><g transform="translate(5.2,5.4) scale(0.82)"><path d="M0 0L0 7L1.8 5.4L3.2 8.4L4.6 7.8L3.2 4.9L5.4 4.9Z" fill="#f4e850" stroke="#202020" stroke-width="0.6"/></g></g>
<path d="M809.5 28.5v21" stroke="#f8f8fc" stroke-width="1.1"/><path d="M810.55 29.0v21" stroke="#9c9cb0" stroke-width="1"/>
<g transform="translate(815,31)"><path d="M3.5 2.5L8 0.8L11 2.2V5L6.5 6.8L3.5 5.4Z" fill="#50d0f0" stroke="#106080" stroke-width="0.6"/><path d="M4 5.6L10.5 4.6" stroke="#c02020" stroke-width="1.4"/><path d="M0.8 7L5.5 5.4L13 8V11L8 13.2L0.8 10.2Z" fill="#40c0e0" stroke="#106080" stroke-width="0.6"/><path d="M0.8 7L8 10V13.2" fill="none" stroke="#106080" stroke-width="0.5"/><g transform="translate(7.4,6.6) scale(0.82)"><path d="M0 0L0 7L1.8 5.4L3.2 8.4L4.6 7.8L3.2 4.9L5.4 4.9Z" fill="#f4e850" stroke="#202020" stroke-width="0.6"/></g></g>
<path d="M828.4 45.0h4.4l-2.2 2.6z" fill="#000"/>
<path d="M834.5 28.5v21" stroke="#f8f8fc" stroke-width="1.1"/><path d="M835.55 29.0v21" stroke="#9c9cb0" stroke-width="1"/>
<g transform="translate(841,32.5)"><path d="M0.5 1.2h9M0.5 3.4h9M0.5 5.6h9M0.5 7.8h9M0.5 10h9M1.4 0.5v10.4M3.6 0.5v10.4M7 0.5v10.4M9 0.5v10.4" stroke="#2030e0" stroke-width="1"/><path d="M5.3 0.3v11" stroke="#d02020" stroke-width="1"/><g transform="translate(5.4,5) scale(0.82)"><path d="M0 0L0 7L1.8 5.4L3.2 8.4L4.6 7.8L3.2 4.9L5.4 4.9Z" fill="#f4e850" stroke="#202020" stroke-width="0.6"/></g></g>
<path d="M856.5 28.5v21" stroke="#f8f8fc" stroke-width="1.1"/><path d="M857.55 29.0v21" stroke="#9c9cb0" stroke-width="1"/>
<g transform="translate(862.5,33.5)"><path d="M2 9.5L5.5 5M11.5 1.8L8 5" stroke="#101010" stroke-width="0.8" stroke-dasharray="1.4 0.9"/><circle cx="5.5" cy="2" r="1.7" fill="#101010"/><circle cx="12" cy="1.8" r="1.5" fill="#101010"/><circle cx="1.8" cy="10" r="1.4" fill="#101010"/><circle cx="2.4" cy="5.2" r="0.9" fill="#101010"/><g transform="translate(6.4,4.4) scale(0.82)"><path d="M0 0L0 7L1.8 5.4L3.2 8.4L4.6 7.8L3.2 4.9L5.4 4.9Z" fill="#f4e850" stroke="#202020" stroke-width="0.6"/></g></g>
<path d="M639 54v10" stroke="#f8f8fc" stroke-width="1.1"/><path d="M640.05 54.5v10" stroke="#9c9cb0" stroke-width="1"/>
<g transform="translate(651.6,62.2)"><rect x="0" y="0" width="2.8" height="2.8" fill="#101070"/></g>
<path d="M658.4 70.0h4.4l-2.2 2.6z" fill="#000"/>
<g transform="translate(666,57)"><path d="M0.8 11.2L11.8 0.6" stroke="#2050d0" stroke-width="1.3"/><path d="M1.2 10.8L11.4 1" stroke="#60c8f0" stroke-width="0.4"/></g>
<path d="M677.4 70.0h4.4l-2.2 2.6z" fill="#000"/>
<g transform="translate(684,61.5)"><path d="M0.6 5.4L4.6 0.8H13L9 5.4Z" fill="#f4ec80" stroke="#3070b0" stroke-width="0.7"/><path d="M0.6 5.8H9" stroke="#40c0e0" stroke-width="0.8"/></g>
<path d="M696.4 70.0h4.4l-2.2 2.6z" fill="#000"/>
<path d="M701.5 53v22" stroke="#f8f8fc" stroke-width="1.1"/><path d="M702.55 53.5v22" stroke="#9c9cb0" stroke-width="1"/>
<g transform="translate(708.5,56.5)"><path d="M2.5 5.5C4 2.5 6.5 5.5 8.5 3C9.5 1.8 10 1 10 0.4" stroke="#30a0a8" stroke-width="0.9" fill="none"/><path d="M10.4 0.5v5.4" stroke="#f4f4f8" stroke-width="0.7"/><path d="M1.6 7.6C3.5 5.6 8.5 5.6 10.6 7.4" stroke="#48d0f0" stroke-width="1.6" fill="none"/><path d="M0.6 12.4C1.2 7.6 11 7.2 12.4 12L11 13.6C9 11 4 11 2 13.8Z" fill="#50d4f4" stroke="#2838e0" stroke-width="0.7"/><path d="M2 11.2C4 9 9 9 11.2 11" stroke="#e8f060" stroke-width="1.2" fill="none"/></g>
<g transform="translate(725,57.5)"><path d="M2 1.5L10 0.6L13.6 3V9.8L9 11.6Z" fill="#2080c0" stroke="#1838c8" stroke-width="0.6"/><path d="M2 4.6C5 1.4 10.4 2.4 11.6 6.6L10 11C9 7.6 6.4 6.4 4.4 7.6L6 10.8L3.6 11.6L0.6 6.4Z" fill="#50d4f4" stroke="#1838c8" stroke-width="0.7"/><path d="M4.2 5.4C6.4 4.2 9.4 5.2 10.4 8" stroke="#e8f060" stroke-width="1.2" fill="none"/><path d="M0.4 6.2L3.4 4.4V8Z" fill="#1020a0"/></g>
<path d="M742.5 53v22" stroke="#f8f8fc" stroke-width="1.1"/><path d="M743.55 53.5v22" stroke="#9c9cb0" stroke-width="1"/>
<g transform="translate(748,57.5)"><circle cx="6" cy="6" r="5.3" fill="none" stroke="#2868c8" stroke-width="1.3"/><circle cx="6" cy="6" r="5.1" fill="none" stroke="#60d0f0" stroke-width="0.4"/></g>
<path d="M760.0 70.0h4.4l-2.2 2.6z" fill="#000"/>
<g transform="translate(767.5,56.5)"><path d="M1.2 12C0.6 7 4.4 6 6 8.4C7.6 11 11.6 8.6 10.6 4.4C10 1.6 6.6 0.6 4.4 3" stroke="#2868d8" stroke-width="1.5" fill="none"/><path d="M1.2 12C0.6 7 4.4 6 6 8.4C7.6 11 11.6 8.6 10.6 4.4C10 1.6 6.6 0.6 4.4 3" stroke="#58d4f4" stroke-width="0.5" fill="none"/><circle cx="1.2" cy="12" r="0.9" fill="#1838c8"/><circle cx="4.4" cy="3" r="0.9" fill="#1838c8"/><circle cx="10.8" cy="5.5" r="0.9" fill="#1838c8"/></g>
<path d="M778.8 70.0h4.4l-2.2 2.6z" fill="#000"/>
<path d="M789.5 54v10" stroke="#f8f8fc" stroke-width="1.1"/><path d="M790.55 54.5v10" stroke="#9c9cb0" stroke-width="1"/>
<g transform="translate(797,56.5)"><path d="M0.6 10.4L4.6 5.4L13 7.6L8.6 12.6Z" fill="#58d4f0" stroke="#3088b0" stroke-width="0.5"/><path d="M1 11.2L8.6 13.2" stroke="#e8e060" stroke-width="1"/><path d="M4.4 9C5.4 7.6 7.8 7.8 8.4 9.2" stroke="#e8e060" stroke-width="1.3" fill="none"/><path d="M6.4 8.4L10.6 2.4" stroke="#f09030" stroke-width="1.3"/><path d="M9.4 0.8h3v3h-3z" fill="#f05828"/><circle cx="6.2" cy="8.6" r="1.2" fill="#f0c030"/></g>
<g transform="translate(814,57)"><path d="M3 2.4C5 0.6 9 0.6 11 2.4V4C9 2.6 5 2.6 3 4Z" fill="#f4f4f8" stroke="#707080" stroke-width="0.5"/><path d="M6.8 1V12.6" stroke="#404048" stroke-width="0.6"/><path d="M7 3.4C9.4 3 11.6 3.6 12.6 4.6L8.4 8L12.4 10.8C11 12.2 8.6 12.6 7 12.4Z" fill="#40c8e8" stroke="#1878a0" stroke-width="0.5"/><path d="M0.6 5.6L4 7.4M0.8 10.2L4 8.6" stroke="#f08020" stroke-width="1.2"/><circle cx="4.8" cy="8" r="1.5" fill="#f8c040" stroke="#f06020" stroke-width="0.5"/></g>
<g transform="translate(833.5,59)"><defs><radialGradient id="sp1" cx="0.38" cy="0.32" r="0.75"><stop offset="0" stop-color="#c0f4ff"/><stop offset="0.45" stop-color="#40c8f0"/><stop offset="1" stop-color="#1888c8"/></radialGradient></defs><circle cx="5" cy="5" r="4.6" fill="url(#sp1)" stroke="#182880" stroke-width="0.8"/></g>
<g transform="translate(851.5,57.5)"><path d="M0.8 2.2V10C0.8 12.2 8.8 12.2 8.8 10V2.2Z" fill="#48d0f0" stroke="#182880" stroke-width="0.8"/><ellipse cx="4.8" cy="2.2" rx="4" ry="1.5" fill="#88e4f8" stroke="#182880" stroke-width="0.8"/><path d="M6.6 3.6V11" stroke="#2898c8" stroke-width="1.2"/></g>
<g transform="translate(866.5,56.5)"><path d="M0.8 5.4C2.4 0.8 10.4 0 13 3L12 6.6C10 4 4.6 4.2 2.6 7Z" fill="#60d8f4" stroke="#5858e0" stroke-width="0.8"/><path d="M2 11C4 8.4 9 8.4 11.4 10.4L10.4 12.8C8.4 11.6 5 11.6 3.2 13Z" fill="#30b0d8" stroke="#2838c0" stroke-width="0.7"/><path d="M6.4 4.6V10.4" stroke="#f08020" stroke-width="1.5"/><path d="M5 6L6.4 4L7.8 6" fill="#f08020"/><path d="M5.2 9.4h2.4v1.6h-2.4z" fill="#f8c040"/></g>
<g transform="translate(884.5,56.5)"><path d="M3.6 5.6L10.6 1.6C13 4 13 8 10.4 10.6L5.6 13.4Z" fill="#48d0f0" stroke="#186078" stroke-width="0.6"/><path d="M3.6 5.6L10.6 1.6L11.6 2.6L4.4 7Z" fill="#187890"/><path d="M4.2 7.4L10.8 3.6" stroke="#2050d0" stroke-width="0.8"/><path d="M0.8 3.8L3.6 5.6M3.2 1.6L3.6 5.6" stroke="#404048" stroke-width="0.6"/><circle cx="3.2" cy="1.4" r="0.9" fill="#101010"/></g>
<g transform="translate(902.5,56.5)"><path d="M0.8 8C1.4 1.4 12.2 1.4 13 8L12 12.8C9.6 10.4 4.2 10.4 1.8 12.8Z" fill="#48d0f0" stroke="#2070c0" stroke-width="0.7"/><path d="M6.9 3L11.4 8.4C8.6 7.4 5.2 7.4 2.4 8.4Z" fill="#f8e070" stroke="#e88020" stroke-width="1"/><path d="M6.9 1V3" stroke="#2048c0" stroke-width="0.8"/><path d="M1.6 10.4C4.4 8.6 9.4 8.6 12.2 10.4" stroke="#2890c0" stroke-width="0.6" fill="none"/></g>
<g transform="translate(919.5,56.5)"><path d="M1.6 7.4C2.4 1.6 11 1.6 12 7.4L11.2 12.6C9.6 9.4 4 9.4 2.4 12.6Z" fill="#50d4f4" stroke="#88a820" stroke-width="0.9"/><path d="M3 7C4.6 4.6 9 4.6 10.6 7" stroke="#88a820" stroke-width="0.8" fill="none"/><path d="M2.4 9.4C4.6 7.2 9 7.2 11.2 9.4" stroke="#f4f4f8" stroke-width="0.8" fill="none"/><path d="M0.6 13.4L2.4 10.6M12.4 8.6V11" stroke="#303038" stroke-width="0.6"/></g>
<g transform="translate(936.5,56.5)"><path d="M1 3.6L9 0.8L13 2.6L5 5.6Z" fill="#48d0f0" stroke="#2060c0" stroke-width="0.5"/><path d="M2.6 5.4L10.6 2.8L12.4 7L4.4 9.8Z" fill="#f4ec40" stroke="#a09010" stroke-width="0.4"/><path d="M1.4 9L4.4 9.8L12.4 7L13 9.2L5 12.4Z" fill="#187890"/><path d="M1.4 9L5 12.4L5.4 13.6L1 10.4Z" fill="#2050c0"/><path d="M1 3.6L5 5.6L5 6.6L1.6 5.2Z" fill="#2060c0"/></g>
<path d="M4 478v10" stroke="#f8f8fc" stroke-width="1.1"/><path d="M5.05 478.5v10" stroke="#9c9cb0" stroke-width="1"/>
<g transform="translate(12.5,482.5)"><path d="M1.6 1.6h7.4l2.6 2.6v8h-10z" fill="#8c8c98"/><path d="M0.6 0.6h7.4l2.6 2.6v8h-10z" fill="#fcfcc4" stroke="#a8a890" stroke-width="0.4"/><path d="M8 0.6v2.6h2.6" fill="#e4e4b0" stroke="#707070" stroke-width="0.4"/></g>
<g transform="translate(29,482.5)"><path d="M0.5 2.6h4l1 1.2h5.5v6.2h-10.5z" fill="#c8a820" stroke="#6a5808" stroke-width="0.5"/><path d="M0.5 10L2.6 5H13L11 10Z" fill="#f4d448" stroke="#6a5808" stroke-width="0.5"/><path d="M9.5 1.8q1.5-1.8 3-0.2M12.5 1.6l-0.2-1.4M12.5 1.6l-1.4 0.1" stroke="#303030" stroke-width="0.6" fill="none"/></g>
<g transform="translate(47,482)"><rect x="0.5" y="0.5" width="11.6" height="10.8" rx="0.8" fill="#908810" stroke="#202008" stroke-width="0.7"/><rect x="2.8" y="1" width="7" height="4.6" fill="#b8e0f8"/><rect x="3" y="7.4" width="6.6" height="3.9" fill="#080808"/><rect x="7.6" y="8.2" width="1.5" height="2.4" fill="#f0f0f0"/></g>
<g transform="translate(64,481.5)"><path d="M4.6 4.6L7.4 0.8L12.8 2.2L10.4 5.8Z" fill="#a8d8f8" stroke="#505860" stroke-width="0.5"/><path d="M0.8 7.2L4.4 4.4L13 5.8V9.2L9.6 11.8L0.8 10.4Z" fill="#a0a868" stroke="#383c20" stroke-width="0.6"/><path d="M0.8 7.2L9.6 8.6L13 5.8" fill="none" stroke="#383c20" stroke-width="0.5"/><path d="M2 8.6L8.4 9.6" stroke="#30c030" stroke-width="0.8"/><path d="M0.8 10.4L9.6 11.8L13 9.2V10L9.6 12.6L0.8 11.2Z" fill="#404428"/></g>
<g transform="translate(82.5,481.5)"><path d="M2.4 0.6L6.6 8M8.6 0.6L4.4 8" stroke="#b4b4c4" stroke-width="1.2"/><path d="M3 0.8L6.8 7.6M8 0.8L4.2 7.6" stroke="#f0f0f8" stroke-width="0.5"/><circle cx="3" cy="10" r="1.9" fill="none" stroke="#b4b4c4" stroke-width="1.1"/><circle cx="8" cy="10" r="1.9" fill="none" stroke="#b4b4c4" stroke-width="1.1"/></g>
<g transform="translate(99,481.5)"><path d="M0.8 0.8h5l2 2v6.4h-7z" fill="#dcdce8" stroke="#b0b0c0" stroke-width="0.7"/><path d="M5 4h5l2 2v6.6h-7z" fill="#dcdce8" stroke="#b0b0c0" stroke-width="0.7"/><path d="M6.4 7.4h4M6.4 9h4M6.4 10.6h4" stroke="#c4c4d0" stroke-width="0.5"/><path d="M1.6 1.8h5l2 2v6.4h-7z" fill="none" stroke="#f8f8fc" stroke-width="0.4"/></g>
<g transform="translate(116.5,481.5)"><rect x="0.8" y="2" width="9.6" height="9" rx="1" fill="#989838" stroke="#383810" stroke-width="0.7"/><rect x="3.4" y="0.6" width="4.4" height="2.6" rx="0.8" fill="#e8c040" stroke="#605010" stroke-width="0.5"/><rect x="2.2" y="4" width="6.8" height="5.6" fill="#c0c070"/><rect x="6.4" y="6.4" width="6.6" height="6" fill="#f4f4fc" stroke="#404050" stroke-width="0.6"/><rect x="7.2" y="9" width="5" height="2.8" fill="#4060d8"/></g>
<g transform="translate(134.5,482.5)"><path d="M2.2 3.6C5 0.2 10.6 0.8 11 5C11.2 7.4 9.6 9.2 7.6 10.2" stroke="#20b060" stroke-width="2.2" fill="none"/><path d="M2.2 3.6C5 0.2 10.6 0.8 11 5" stroke="#3078e0" stroke-width="0.7" fill="none"/><path d="M0.4 1L0.8 6.8L6 5.4Z" fill="#20b060" stroke="#2060c0" stroke-width="0.4"/></g>
<path d="M146.4 494.0h4.4l-2.2 2.6z" fill="#000"/>
<g transform="translate(153,482.5)"><path d="M10.8 3.6C8 0.2 2.4 0.8 2 5C1.8 7.4 3.4 9.2 5.4 10.2" stroke="#b4b4c6" stroke-width="2.2" fill="none"/><path d="M12.6 1L12.2 6.8L7 5.4Z" fill="#b4b4c6"/><path d="M11.4 4.4C8.6 1 3 1.6 2.6 5.8" stroke="#f4f4fa" stroke-width="0.6" fill="none"/></g>
<path d="M165.4 494.0h4.4l-2.2 2.6z" fill="#000"/>
<g transform="translate(171.5,482.5)"><path d="M0.8 0.6L0.8 9.2L2.9 7.3L4.6 11L6.2 10.3L4.6 6.7L7.2 6.7Z" fill="#f0e040" stroke="#787010" stroke-width="0.5"/><text x="5.4" y="9.8" font-size="13.2" font-weight="bold" fill="#101078">?</text></g>
<path d="M193.5 478v10" stroke="#f8f8fc" stroke-width="1.1"/><path d="M194.55 478.5v10" stroke="#9c9cb0" stroke-width="1"/>
<g transform="translate(201.5,481.5)"><text x="0.4" y="9.8" font-family="Liberation Serif, serif" font-style="italic" font-size="13.5" fill="#080808">f</text><text x="5.2" y="10.6" font-size="7" font-weight="bold" fill="#080808" letter-spacing="-0.6">(x)</text></g>
<g transform="translate(218.5,481.5)"><path d="M6.6 0.8C10.2 0.8 12.6 2.6 12.6 5C12.6 7.4 10 9.2 6.6 9.2C5.8 9.2 5.2 9.1 4.6 9L1.6 11.8L2.6 8.2C1.4 7.4 0.6 6.2 0.6 5C0.6 2.6 3 0.8 6.6 0.8Z" fill="#d4d4dc" stroke="#101010" stroke-width="1.25"/><path d="M3.4 5.4C4.4 3 6 6.6 7 4.2C8 2.4 9.4 5.6 10.2 3.6" stroke="#404048" stroke-width="0.7" fill="none"/><path d="M4 6.8h5" stroke="#606068" stroke-width="0.6"/></g>
<g transform="translate(237.5,482.5)"><rect x="0.8" y="0.6" width="4.4" height="9.6" rx="2" fill="#dcdce8" stroke="#c0c0d0" stroke-width="0.6"/><circle cx="3" cy="3" r="1.3" fill="#f4f4fa"/><circle cx="3" cy="7.4" r="1.3" fill="#c8c8d8"/></g>
<g transform="translate(250.5,481.5)"><rect x="0.5" y="0.5" width="11" height="10.4" fill="#e8e8f0" stroke="#303040" stroke-width="0.6"/><rect x="0.5" y="0.5" width="11" height="2.6" fill="#1828d8"/><path d="M0.5 5h11M0.5 7h11M0.5 9h11M3.2 3v8M6 3v8M8.8 3v8" stroke="#303040" stroke-width="0.9"/></g>
<path d="M261.8 494.0h4.4l-2.2 2.6z" fill="#000"/>
<g transform="translate(268,481)"><path d="M4 8L9.6 2M4 8H10M4 8L9.6 12" stroke="#202020" stroke-width="0.7"/><rect x="0.6" y="6" width="3.6" height="3.8" fill="#f0d840" stroke="#303060" stroke-width="0.6"/><rect x="10.4" y="0.6" width="3.4" height="3.4" fill="#3050f0" stroke="#1020a0" stroke-width="0.4"/><rect x="10.4" y="6.2" width="3.4" height="3.4" fill="#3050f0" stroke="#1020a0" stroke-width="0.4"/><rect x="10.4" y="11" width="3.4" height="2.6" fill="#3050f0"/><circle cx="12.1" cy="2.3" r="0.8" fill="#a0d0ff"/><circle cx="12.1" cy="7.9" r="0.8" fill="#a0d0ff"/><circle cx="8.6" cy="4" r="0.8" fill="#e02020"/><circle cx="8.4" cy="10.6" r="0.8" fill="#e02020"/><circle cx="5.2" cy="5" r="0.7" fill="#e02020"/></g>
<g transform="translate(287.5,480)"><path d="M3 6V4.4C3 0.4 9 0.4 9 4.4V6" stroke="#787880" stroke-width="1.6" fill="none"/><path d="M3.6 6V4.4C3.6 1.6 8 1.6 8 4.4" stroke="#d0d0d8" stroke-width="0.5" fill="none"/><path d="M1 6.4L8 5.4L11.4 6.6V12.4L4.8 14L1 12.4Z" fill="#808088" stroke="#282830" stroke-width="0.6"/><path d="M1 6.4L4.8 7.8V14" fill="none" stroke="#282830" stroke-width="0.5"/><path d="M4.8 7.8L11.4 6.6" stroke="#c8c8d0" stroke-width="0.6"/><rect x="7" y="9" width="2" height="2.6" fill="#181818"/><path d="M1.6 7.4L4.2 8.4V13L1.6 12Z" fill="#a8a8b0"/></g>
<path d="M298.40000000000003 494.0h4.4l-2.2 2.6z" fill="#000"/>
<g transform="translate(304.5,480.5)"><rect x="0.6" y="0.8" width="4.8" height="4.8" fill="#e8e060" stroke="#404010" stroke-width="0.5"/><rect x="1.2" y="2" width="3.6" height="3" fill="#189890"/><rect x="0.6" y="7" width="4.8" height="4.8" fill="#e8e060" stroke="#404010" stroke-width="0.5"/><rect x="1.2" y="8.2" width="3.6" height="3" fill="#189890"/><path d="M0.8 13.2h4.4" stroke="#909098" stroke-width="0.8"/><path d="M6.6 0.8C8.4 0.8 7.4 6 9.4 6.4C7.4 6.8 8.4 12.4 6.6 12.4" stroke="#303038" stroke-width="0.8" fill="none"/><path d="M10.4 5.4h2.6M10.4 7h2.6" stroke="#505058" stroke-width="0.7"/></g>
<path d="M326.5 478v10" stroke="#f8f8fc" stroke-width="1.1"/><path d="M327.55 478.5v10" stroke="#9c9cb0" stroke-width="1"/>
<g transform="translate(333.5,482)"><g fill="none" stroke-linecap="round" stroke-linejoin="round"><path d="M2.8 9.6L10.6 2.8M6.8 6.2L2.4 2M6.6 6.4L13 8M2 8.4L4.4 10.8" stroke="#3860c8" stroke-width="2.3"/><path d="M2.8 9.6L10.6 2.8M6.8 6.2L2.4 2M6.6 6.4L13 8M2 8.4L4.4 10.8" stroke="#58dcf6" stroke-width="1.3"/></g></g>
<g transform="translate(351.5,482)"><rect x="0.4" y="0.4" width="12" height="11.6" fill="#f0f080" stroke="#30a0a0" stroke-width="0.8"/><g fill="#080808"><path d="M1.6 6.2L4.6 4.6V7.8Z"/><path d="M11.2 6.2L8.2 4.6V7.8Z"/><path d="M6.4 1.4L4.8 4.2H8Z"/><path d="M6.4 11L4.8 8.2H8Z"/><rect x="5.4" y="5.2" width="2" height="2"/></g></g>
<g transform="translate(368.5,481.5)"><g fill="#101078"><path d="M6.6 0.4L4 3.6H9.2Z"/><path d="M6.6 13L4 9.8H9.2Z"/><path d="M0.4 6.7L3.6 4.1V9.3Z"/><path d="M12.8 6.7L9.6 4.1V9.3Z"/><rect x="5.8" y="2.6" width="1.6" height="8.2"/><rect x="2.6" y="5.9" width="8" height="1.6"/><circle cx="6.6" cy="6.7" r="1.8"/></g></g>
<g transform="translate(386.5,482.5)"><circle cx="8.4" cy="7.4" r="3.8" fill="#40b8f0" stroke="#1848c0" stroke-width="0.6"/><path d="M0.6 3.4V8.6" stroke="#1838a0" stroke-width="1.2"/><path d="M1.4 4.4C3 1.6 8 0.4 11.6 2C13.6 3 13.4 4.8 11.6 5C9 5.4 8 6.4 5 6.8C3 7 1.4 6.4 1.4 4.4Z" fill="#f8d0b0" stroke="#503020" stroke-width="0.6"/><path d="M5.6 3.4C7.6 2.6 9.6 2.8 11.6 3.6" stroke="#181818" stroke-width="0.7" fill="none"/></g>
<g transform="translate(403.5,481.5)"><path d="M8.4 8.4L13 12.6" stroke="#1838a0" stroke-width="2.2"/><path d="M8.6 8L13.2 12.2" stroke="#60a8f0" stroke-width="0.6"/><circle cx="5" cy="5" r="4" fill="#f8f8fc" stroke="#182868" stroke-width="1.2"/><path d="M3 5h4M5 3v4" stroke="#080808" stroke-width="1.3"/></g>
<g transform="translate(420.5,481.5)"><path d="M8.4 8.4L13 12.6" stroke="#1838a0" stroke-width="2.2"/><path d="M8.6 8L13.2 12.2" stroke="#60a8f0" stroke-width="0.6"/><circle cx="5" cy="5" r="4" fill="#f8f8fc" stroke="#182868" stroke-width="1.2"/><path d="M3 5h4" stroke="#080808" stroke-width="1.3"/></g>
<g transform="translate(438.5,481.5)"><path d="M0.6 11.8L5 7.6H13.4L9 11.8Z" fill="#30b0c0" stroke="#106080" stroke-width="0.6"/><path d="M6.8 9.8V2.4" stroke="#d0a060" stroke-width="1.2"/><path d="M4.8 3.4L6.8 0.6L8.8 3.4Z" fill="#8080e8" stroke="#3030a0" stroke-width="0.4"/></g>
<g transform="translate(456,481)"><path d="M0.8 4L4.4 0.8H13.2V9.4L9.6 12.8H0.8Z" fill="#50d0f8" stroke="#2050e0" stroke-width="0.8" stroke-linejoin="round"/><path d="M0.8 4H9.6V12.8M9.6 4L13.2 0.8" fill="none" stroke="#2050e0" stroke-width="0.8"/><path d="M10 4.4L12.8 1.8V9.2L10 11.8Z" fill="#30b0e8"/><path d="M1.6 3.6L4.6 1.4H12L9.4 3.6Z" fill="#90e4fc"/></g>
<path d="M468.0 494.0h4.4l-2.2 2.6z" fill="#000"/>
<g transform="translate(475.5,480.5)"><path d="M1 3V11C1 14 11 14 11 11V3Z" fill="#f0e048" stroke="#706010" stroke-width="0.9"/><path d="M3 4.4V12.6C4 13.2 5 13.2 5.6 13.2V4.8Z" fill="#50d0f0"/><path d="M5.6 4.8V13.2C7 13.2 8 13 8.8 12.6V4.4Z" fill="#101080"/><ellipse cx="6" cy="3" rx="5" ry="2" fill="#c8c890" stroke="#706010" stroke-width="0.9"/><ellipse cx="6" cy="3.2" rx="3" ry="1" fill="#e8e8c0"/></g>
<g transform="translate(486.5,493)"><rect x="0" y="0" width="6.4" height="4.4" fill="#f4f4f8"/></g>
<path d="M487.6 494.0h4.4l-2.2 2.6z" fill="#000"/>
<g transform="translate(494.5,481.5)"><rect x="0.5" y="0.5" width="11.4" height="11" fill="#48d0f0" stroke="#5050c0" stroke-width="0.9"/><path d="M2.4 8L5 5.4L8 5.8L10 7.6L6 9.6L3.4 9.8Z" fill="#f4f4fc" stroke="#303060" stroke-width="0.5"/><path d="M3 4L5.4 2L8.6 2.4L9.6 3.8L6.4 5.2Z" fill="#f0e870" stroke="#808020" stroke-width="0.4"/><path d="M2.8 9.4L5 7.6L6.6 8.6L4.6 10.4Z" fill="#2050c0"/></g>
<g transform="translate(512,481.5)"><rect x="0.5" y="0.5" width="11.4" height="11" fill="#48d0f0" stroke="#5050c0" stroke-width="0.9"/><path d="M2.4 8.4L5 5.8L8 6.2L10 8L6 10L3.4 10.2Z" fill="#f4f4fc" stroke="#303060" stroke-width="0.5"/><path d="M3.6 8.4L5.6 6.8L7.2 7.4L5.4 9.2Z" fill="#e8d860"/><path d="M2.8 9.8L5 8L6.6 9L4.6 10.8Z" fill="#2050c0"/></g>
<g transform="translate(533.6,478.2)"><rect x="0" y="0" width="1.2" height="1.2" fill="#9090a8"/></g>
<path d="M545.5 478v10" stroke="#f8f8fc" stroke-width="1.1"/><path d="M546.55 478.5v10" stroke="#9c9cb0" stroke-width="1"/>
<g transform="translate(553,481)"><path d="M0.8 8L3.4 6H12.6V10.4L10 12.6H0.8Z" fill="#e4e4ec" stroke="#181818" stroke-width="0.8" stroke-linejoin="round"/><path d="M0.8 8H10V12.6M10 8L12.6 6" fill="none" stroke="#181818" stroke-width="0.7"/><path d="M2.4 10h6" stroke="#808088" stroke-width="0.8"/><circle cx="2.6" cy="2" r="1.8" fill="#2090c0" stroke="#104070" stroke-width="0.4"/><path d="M4.6 1.6C8 0 10.4 2 10.6 5" stroke="#2040e0" stroke-width="1" fill="none"/><path d="M9.2 3.6L10.8 5.6L11.8 3.4Z" fill="#2040e0"/><path d="M8.8 4.6V6" stroke="#e8c040" stroke-width="0.8"/></g>
<path d="M574.5 478v10" stroke="#f8f8fc" stroke-width="1.1"/><path d="M575.55 478.5v10" stroke="#9c9cb0" stroke-width="1"/>
<g transform="translate(582,481)"><path d="M1 3.2H12" stroke="#2838d0" stroke-width="1.1"/><path d="M3.4 0.8L0.8 3.2L3.4 5.6M9.6 0.8L12.2 3.2L9.6 5.6" stroke="#2838d0" stroke-width="1.1" fill="none"/><rect x="0.6" y="7.6" width="12" height="4.4" fill="#f4c0c8" stroke="#3060c0" stroke-width="0.7"/><path d="M2 9.8h9.4" stroke="#d04060" stroke-width="1.4" stroke-dasharray="1.4 0.8"/></g>
<g transform="translate(600.5,481)"><path d="M3 1.4L9.4 0.6V10.4L7 12.8H5V9.6L3 10Z" fill="#404048" stroke="#181818" stroke-width="0.6"/><path d="M9.4 0.6L10.6 1.4V11L9.4 10.4Z" fill="#787880"/><rect x="0.6" y="3.4" width="4.8" height="4" fill="#30a890" stroke="#101010" stroke-width="0.5"/><circle cx="3" cy="5.4" r="1.3" fill="#4060e0"/><path d="M6 9.4h3v2.6h-3z" fill="#606068"/></g>
<g transform="translate(619.5,481)"><circle cx="4" cy="1.8" r="1.4" fill="none" stroke="#303010" stroke-width="0.9"/><path d="M0.8 4.4C0.8 3.2 7.2 3.2 7.2 4.4V10.6C7.2 12 0.8 12 0.8 10.6Z" fill="#d0b820" stroke="#504008" stroke-width="0.6"/><path d="M1.8 4.6V11" stroke="#f4e470" stroke-width="1"/><path d="M6 4.6V11" stroke="#907808" stroke-width="1"/></g>
<path d="M639 478v10" stroke="#f8f8fc" stroke-width="1.1"/><path d="M640.05 478.5v10" stroke="#9c9cb0" stroke-width="1"/>
<g transform="translate(646.5,482)"><path d="M0.6 2.6H3.4L4.4 0.8H8.6L9.6 2.6H13V9H0.6Z" fill="#383840" stroke="#101010" stroke-width="0.6"/><path d="M0.6 2.6H13V4H0.6Z" fill="#b0b0b8"/><circle cx="6.6" cy="5.8" r="2.9" fill="#181820" stroke="#8080a0" stroke-width="0.7"/><circle cx="6.6" cy="5.8" r="1.3" fill="#5050a0"/><rect x="10.4" y="3" width="1.8" height="1" fill="#e8e8e8"/><path d="M2 10h10" stroke="#b8b8c8" stroke-width="0.8"/></g>
<path d="M668 478v10" stroke="#f8f8fc" stroke-width="1.1"/><path d="M669.05 478.5v10" stroke="#9c9cb0" stroke-width="1"/>
<g transform="translate(675.5,481)"><path d="M2 3L8.6 1.2C11 3 11.6 6.4 10 9L4.6 10.8C2.4 9 1.4 6 2 3Z" fill="#58d8f4" stroke="#2878c0" stroke-width="0.6"/><path d="M0.6 12.6L14 0.6" stroke="#3838a0" stroke-width="0.7"/><circle cx="10.6" cy="4.8" r="2.4" fill="none" stroke="#2838e0" stroke-width="0.9"/><circle cx="6" cy="5.6" r="1.1" fill="#e02020"/><circle cx="8.6" cy="7" r="1.1" fill="#e02020"/><circle cx="10.4" cy="2.2" r="0.9" fill="#f0e040"/><path d="M3.4 12.6C6 13.2 9 13 11.4 12.2" stroke="#30b0b0" stroke-width="0.9" fill="none"/></g>
<g transform="translate(693,481)"><path d="M0.6 7.4L5.6 5L13.4 6.4L9 9.4Z" fill="#38b8d8" stroke="#106080" stroke-width="0.5"/><path d="M0.6 7.4L9 9.4V12.4L1.4 10.6Z" fill="#1890b0"/><path d="M9 9.4L13.4 6.4C13.2 8.6 11.6 11 9 12.4Z" fill="#a01828"/><path d="M5.6 6.6V1.8" stroke="#807810" stroke-width="0.8"/><circle cx="5.6" cy="1.4" r="1.2" fill="#f8f040"/><path d="M1 2.6L4.6 5.6M1 2.6L3.2 2.8M1 2.6L1.4 4.6" stroke="#e02020" stroke-width="0.8" fill="none"/></g>
<g transform="translate(710.5,481)"><path d="M0.8 3C4 0.6 9 0 12.6 1.6C13.8 5 13.2 9 11.6 11.6C10.4 9 9 8.6 7 9.2C5 9.8 3.6 11 2.4 12.4C1 9.6 0.4 6 0.8 3Z" fill="#1880b0" stroke="#103060" stroke-width="0.6"/><path d="M2.4 4.4C4 3 6 2.6 7.4 3.4C7.4 6 5.4 8 3 8.4Z" fill="#30d0e0"/><ellipse cx="5" cy="5.6" rx="1.5" ry="2" fill="#e03020"/><ellipse cx="5" cy="5.6" rx="0.7" ry="1" fill="#f8e040"/><path d="M9 3C10.6 3.6 11.6 6 11 9C9.6 8 8.8 6 9 3Z" fill="#e03020"/><path d="M9.6 4.4C10.4 5.2 10.6 6.4 10.4 7.6" stroke="#f8e040" stroke-width="0.8" fill="none"/></g>
<g transform="translate(727.5,481)"><path d="M1.4 1.6H13" stroke="#707078" stroke-width="0.6"/><path d="M1.4 11.6C4 9.6 10 9.4 13.4 11L13 12.6C10 11.4 4.6 11.4 2 13Z" fill="#28b0c0" stroke="#106080" stroke-width="0.4"/><g stroke="#f08018" stroke-width="1.1"><path d="M2.4 10.6V5.4M4 10V3M5.6 9.8V1.6M7.2 9.6V4.2M8.8 9.8V2.4M10.4 10V5M12 10.4V6.4"/></g><g stroke="#f8e030" stroke-width="0.5"><path d="M3.2 10.2V6M4.8 9.8V4.6M6.4 9.6V3M8 9.6V5M9.6 9.8V4M11.2 10.2V6.4"/></g></g>
<g transform="translate(745.5,481)"><path d="M1 3.4C3 0.8 5 1.4 6.4 3.6C8 6 10 6.4 13 4.4V8.4C10 10.4 8 9.6 6.4 8C5 6.6 3 6.8 1 8.6Z" fill="#e08890" stroke="#c04858" stroke-width="0.5"/><path d="M2 3.4V7.6M3.6 2.4V6.8M5.2 3V7M7 5.2V8.4M8.8 6.4V9.2M10.6 6V9.2M12 5.4V8.6" stroke="#c85868" stroke-width="0.5"/><path d="M1 8.8C3 7 5 6.8 6.4 8.2C8 9.8 10 10.6 13 8.6" stroke="#f8e040" stroke-width="1" fill="none"/><path d="M1 10.2C3 8.4 5 8.2 6.4 9.6C8 11.2 10 12 13 10" stroke="#3050d0" stroke-width="0.9" fill="none"/></g>
<path d="M768 478v10" stroke="#f8f8fc" stroke-width="1.1"/><path d="M769.05 478.5v10" stroke="#9c9cb0" stroke-width="1"/>
<g transform="translate(775.5,482)"><path d="M1.6 7.4C0.6 3.4 3.6 0.8 6.8 0.8C10 0.8 12.4 3 12.2 6.2C12 9.6 9.4 11.6 6.6 11.6C4.4 11.6 3 10.6 2.4 9.4" stroke="#a0a0b2" stroke-width="1.8" fill="none"/><path d="M6.2 6.6C6.2 5.2 8.6 5.2 8.6 6.8C8.6 9 4.2 9 4.2 6.2C4.2 3.2 10.2 3.2 10.2 6.6" stroke="#a0a0b2" stroke-width="1.6" fill="none"/><path d="M2.4 8.2C1.6 4.6 4 2 7 1.8" stroke="#f4f4fa" stroke-width="0.5" fill="none"/></g>
<g transform="translate(793,481)"><circle cx="6.6" cy="6.6" r="6" fill="#1828a0" stroke="#101060" stroke-width="0.5"/><path d="M2 4C4 1 9 1 11.4 4C9 3 4 3 2 4Z" fill="#60c8f0"/><path d="M1 8C2 5 5 4.6 6 6C3.6 6.4 2.4 8.4 2.6 11C1.6 10 1 9 1 8Z" fill="#e8e070"/><path d="M11.6 4.6C12.8 6.6 12.6 9.4 11 11.4C11.6 9 11.4 6.4 11.6 4.6Z" fill="#30b090"/><path d="M5.4 6.4V3.8C5.4 2.8 6.8 2.8 6.8 3.8V6.2C6.8 5.4 8 5.4 8 6.2C8 5.6 9.2 5.6 9.2 6.4C9.2 6 10.2 6 10.2 6.8V10.4C10.2 12.4 8.8 13.2 7 13.2C5.6 13.2 5 12.6 4.4 11.6L3 9C2.6 8.2 3.6 7.6 4.2 8.4L5.4 9.6Z" fill="#f8f8f8" stroke="#202020" stroke-width="0.5"/></g>
<g transform="translate(810.5,481.5)"><path d="M5 8.4V1.6M5 8.4L12 7.2M5 8.4L1 12.4" stroke="#908838" stroke-width="1"/><path d="M3.6 2.6L5 0.4L6.4 2.6Z" fill="#101078"/><path d="M10.6 5.8L13 7L10.8 8.6Z" fill="#101078"/><circle cx="1.2" cy="12.2" r="0.9" fill="#101078"/></g>
<g transform="translate(827.5,481)"><path d="M0.6 1.6h13M0.6 4.4h13M0.6 7.2h13M0.6 10h13M2 0.4v11.6M4.8 0.4v11.6M7.6 0.4v11.6M10.4 0.4v11.6M13 0.4v11.6" stroke="#3068e0" stroke-width="0.9"/><g fill="#40b8c8"><circle cx="2" cy="1.6" r="0.7"/><circle cx="7.6" cy="4.4" r="0.7"/><circle cx="4.8" cy="10" r="0.7"/><circle cx="10.4" cy="7.2" r="0.7"/><circle cx="13" cy="10" r="0.7"/></g></g>
<path d="M840.4 494.0h4.4l-2.2 2.6z" fill="#000"/>
<g transform="translate(847.5,481)"><path d="M1.4 2.4L3.4 0.8H11L11.6 1.6V10.4L9.6 12.2H2L1.4 11.4Z" fill="#48d8f0" stroke="#304848" stroke-width="0.8" stroke-linejoin="round"/><path d="M1.4 2.4H9.6V12.2M9.6 2.4L11.6 1" fill="none" stroke="#304848" stroke-width="0.6"/><path d="M0.2 8.6C3 9.8 9 9.8 12.6 8.2" stroke="#40b8b0" stroke-width="0.8" fill="none"/><path d="M0.6 4.6C3 5.6 9 5.6 12.2 4.4" stroke="#88e8f8" stroke-width="0.6" fill="none"/></g>
<path d="M859.0 494.0h4.4l-2.2 2.6z" fill="#000"/>
<g transform="translate(865.5,482)"><rect x="0.6" y="0.6" width="4.6" height="2.8" rx="0.6" fill="#90c8f8" stroke="#2848d0" stroke-width="0.7"/><rect x="8.4" y="7.4" width="4.6" height="2.8" rx="0.6" fill="#90c8f8" stroke="#2848d0" stroke-width="0.7"/><path d="M3 3.4V5.4" stroke="#2848d0" stroke-width="0.7"/><path d="M6.6 2.4L3.6 6.6L6 6.8L3 11.4" stroke="#e01818" stroke-width="1.3" fill="none"/><path d="M6 8.6H8.4" stroke="#e01818" stroke-width="0.9"/></g>
<g transform="translate(882.5,481)"><path d="M1 4C2.4 1 6.6 0.6 9 2.4L7 4.4C5.6 3.6 3.6 4 3 5.6L4.4 8.4L3 9Z" fill="#f4f4fc" stroke="#2838c0" stroke-width="0.7"/><path d="M5 5.6C7 3.4 11 4 12.6 7.4C12.4 9.4 11.4 10.6 10.4 11.6C10 9.6 8.4 8.6 6.4 9.6L4.4 11Z" fill="#f4ec30" stroke="#505010" stroke-width="0.7"/><path d="M4 11.4C5.6 10 8 10 9.6 11.6" stroke="#303040" stroke-width="0.9" fill="none"/></g>
<path d="M895.0 494.0h4.4l-2.2 2.6z" fill="#000"/>
<g transform="translate(900.5,481)"><path d="M1 8L8.4 1L14 4.6L6.6 11.6Z" fill="#d2d4f0" stroke="#2848e0" stroke-width="0.9" stroke-linejoin="round"/><path d="M1 8L6.6 11.6L14 4.6V6.4L6.6 13.4L1 9.8Z" fill="#50d0f0" stroke="#2848e0" stroke-width="0.8" stroke-linejoin="round"/><path d="M1 8L6.6 11.6L14 4.6" fill="none" stroke="#2848e0" stroke-width="0.8"/></g>
<path d="M914.5999999999999 494.0h4.4l-2.2 2.6z" fill="#000"/>
<g transform="translate(931,476)"><path d="M10.2 1.4C12.6 0.4 14.6 1.2 13.4 3C12.6 4.2 11 4.6 10.4 5" stroke="#e02030" stroke-width="1.2" fill="none"/><path d="M10.6 5C13.4 4.6 15.6 5.6 14 7.4" stroke="#f08028" stroke-width="1.2" fill="none"/><path d="M4.4 6.4C7.4 4.8 10.8 5.6 10.4 8.2C10 10.6 6.4 12.8 2.4 12.8" stroke="#5030a0" stroke-width="1.1" fill="none"/><path d="M6 6.2L2.6 13" stroke="#5030a0" stroke-width="1.1"/><path d="M15.6 6.6C12.6 6.4 11.6 8.2 13.4 9.6C15.2 11 14 12.6 10.6 12.8" stroke="#5030a0" stroke-width="1.1" fill="none"/><text x="5.2" y="19.4" font-size="6.3" font-weight="bold" font-style="italic" fill="#4830a0" letter-spacing="0.1">CATIA</text></g>
<path d="M940 79h10" stroke="#fff" stroke-width="1.2"/><path d="M940.5 80.1h10" stroke="#a4a4b8" stroke-width="0.9"/>
<g transform="translate(941,85.5)"><path d="M1 5.4L7 1L12.6 3.4L6.4 8Z" fill="#f4f4f8" stroke="#181818" stroke-width="0.8" stroke-linejoin="round"/><path d="M1.4 6.4V14L6.4 9.4Z" fill="#38a890"/><path d="M6.4 8L12.6 3.4L14 8L8 12.4Z" fill="#e8e8f0" stroke="#181818" stroke-width="0.8" stroke-linejoin="round"/><path d="M6.4 8L8 12.4" stroke="#181818" stroke-width="0.8"/><path d="M8 12.4L14 8L14 9L8.4 13.4Z" fill="#38a890"/></g>
<path d="M940 108h10" stroke="#fff" stroke-width="1.2"/><path d="M940.5 109.1h10" stroke="#a4a4b8" stroke-width="0.9"/>
<g transform="translate(943,115.5)"><path d="M0.6 0.6h7l3 3v10h-10z" fill="#fcfcfc" stroke="#9090a0" stroke-width="0.5"/><path d="M7.6 0.6v3h3" fill="#d8d8e0" stroke="#9090a0" stroke-width="0.4"/><rect x="0.6" y="5.2" width="10" height="5.8" fill="#f8d0d0"/><text x="5.6" y="10.6" text-anchor="middle" font-size="6.6" font-weight="bold" fill="#e00818" letter-spacing="-0.5">PCS</text></g>
<path d="M940 136h10" stroke="#fff" stroke-width="1.2"/><path d="M940.5 137.1h10" stroke="#a4a4b8" stroke-width="0.9"/>
<g transform="translate(941.5,142.5)"><path d="M4.4 4.2C4.4 2.6 12.6 2.6 12.6 4.2V12.4C12.6 14 4.4 14 4.4 12.4Z" fill="#f4f4fa"/><path d="M3.6 3.6C3.6 2 11.8 2 11.8 3.6V11.8C11.8 13.4 3.6 13.4 3.6 11.8Z" fill="#c8c8d8" stroke="#a6a6b8" stroke-width="0.8"/><path d="M9 3V13" stroke="#b0b0c2" stroke-width="2.4"/><ellipse cx="7.7" cy="3.6" rx="4.1" ry="1.4" fill="#e4e4ee" stroke="#a6a6b8" stroke-width="0.7"/><path d="M2.4 1.6V11" stroke="#a0a0b4" stroke-width="0.8"/><path d="M3.2 2.2V11.4" stroke="#f8f8fc" stroke-width="0.5"/><rect x="1" y="4.6" width="3.6" height="2.6" fill="#e0e0ec" stroke="#a0a0b4" stroke-width="0.7"/><rect x="1" y="8.8" width="3.6" height="2.6" fill="#e0e0ec" stroke="#a0a0b4" stroke-width="0.7"/><circle cx="2.4" cy="1.4" r="1" fill="#b8b8c8"/><path d="M4.6 6h3M4.6 10.2h3" stroke="#a0a0b4" stroke-width="0.7"/></g>
<g transform="translate(941.5,161)"><path d="M4.4 4.2C4.4 2.6 12.6 2.6 12.6 4.2V12.4C12.6 14 4.4 14 4.4 12.4Z" fill="#f4f4fa"/><path d="M3.6 3.6C3.6 2 11.8 2 11.8 3.6V11.8C11.8 13.4 3.6 13.4 3.6 11.8Z" fill="#c8c8d8" stroke="#a6a6b8" stroke-width="0.8"/><path d="M9 3V13" stroke="#b0b0c2" stroke-width="2.4"/><ellipse cx="7.7" cy="3.6" rx="4.1" ry="1.4" fill="#e4e4ee" stroke="#a6a6b8" stroke-width="0.7"/><path d="M2.4 1.6V11" stroke="#a0a0b4" stroke-width="0.8"/><path d="M3.2 2.2V11.4" stroke="#f8f8fc" stroke-width="0.5"/><rect x="1" y="4.6" width="3.6" height="2.6" fill="#e0e0ec" stroke="#a0a0b4" stroke-width="0.7"/><rect x="1" y="8.8" width="3.6" height="2.6" fill="#e0e0ec" stroke="#a0a0b4" stroke-width="0.7"/><circle cx="2.4" cy="1.4" r="1" fill="#b8b8c8"/><path d="M4.6 6h3M4.6 10.2h3" stroke="#a0a0b4" stroke-width="0.7"/><path d="M5 2L9 0.6" stroke="#b4b4c6" stroke-width="0.8"/></g>
<g transform="translate(941.5,179)"><path d="M4.4 4.2C4.4 2.6 12.6 2.6 12.6 4.2V12.4C12.6 14 4.4 14 4.4 12.4Z" fill="#f4f4fa"/><path d="M3.6 3.6C3.6 2 11.8 2 11.8 3.6V11.8C11.8 13.4 3.6 13.4 3.6 11.8Z" fill="#c8c8d8" stroke="#a6a6b8" stroke-width="0.8"/><path d="M9 3V13" stroke="#b0b0c2" stroke-width="2.4"/><ellipse cx="7.7" cy="3.6" rx="4.1" ry="1.4" fill="#e4e4ee" stroke="#a6a6b8" stroke-width="0.7"/><path d="M2.4 1.6V11" stroke="#a0a0b4" stroke-width="0.8"/><path d="M3.2 2.2V11.4" stroke="#f8f8fc" stroke-width="0.5"/><rect x="1" y="4.6" width="3.6" height="2.6" fill="#e0e0ec" stroke="#a0a0b4" stroke-width="0.7"/><rect x="1" y="8.8" width="3.6" height="2.6" fill="#e0e0ec" stroke="#a0a0b4" stroke-width="0.7"/><circle cx="2.4" cy="1.4" r="1" fill="#b8b8c8"/><path d="M4.6 6h3M4.6 10.2h3" stroke="#a0a0b4" stroke-width="0.7"/></g>
<g transform="translate(941.5,197)"><path d="M4.4 4.2C4.4 2.6 12.6 2.6 12.6 4.2V12.4C12.6 14 4.4 14 4.4 12.4Z" fill="#f4f4fa"/><path d="M3.6 3.6C3.6 2 11.8 2 11.8 3.6V11.8C11.8 13.4 3.6 13.4 3.6 11.8Z" fill="#c8c8d8" stroke="#a6a6b8" stroke-width="0.8"/><path d="M9 3V13" stroke="#b0b0c2" stroke-width="2.4"/><ellipse cx="7.7" cy="3.6" rx="4.1" ry="1.4" fill="#e4e4ee" stroke="#a6a6b8" stroke-width="0.7"/><path d="M2.4 1.6V11" stroke="#a0a0b4" stroke-width="0.8"/><path d="M3.2 2.2V11.4" stroke="#f8f8fc" stroke-width="0.5"/><rect x="1" y="4.6" width="3.6" height="2.6" fill="#e0e0ec" stroke="#a0a0b4" stroke-width="0.7"/><rect x="1" y="8.8" width="3.6" height="2.6" fill="#e0e0ec" stroke="#a0a0b4" stroke-width="0.7"/><circle cx="2.4" cy="1.4" r="1" fill="#b8b8c8"/><path d="M4.6 6h3M4.6 10.2h3" stroke="#a0a0b4" stroke-width="0.7"/><path d="M4 1.4L7 3.4L10 1" stroke="#b4b4c6" stroke-width="0.8" fill="none"/></g>
<path d="M940 217h10" stroke="#fff" stroke-width="1.2"/><path d="M940.5 218.1h10" stroke="#a4a4b8" stroke-width="0.9"/>
<g transform="translate(941.5,224.5)"><g fill="#f4c4ac" stroke="#a06040" stroke-width="0.55"><circle cx="7" cy="2.4" r="1.7"/><path d="M4.6 8.4C4.6 3.6 9.4 3.6 9.4 8.4Z"/><circle cx="3.2" cy="5.8" r="1.6"/><path d="M0.8 11.6C0.8 7 5.6 7 5.6 11.6Z"/><circle cx="10.8" cy="5.8" r="1.6"/><path d="M8.4 11.6C8.4 7 13.2 7 13.2 11.6Z"/><circle cx="7" cy="6.6" r="1.5"/><path d="M4.8 11.8C4.8 7.6 9.2 7.6 9.2 11.8Z"/></g><path d="M1 12.6h12" stroke="#e8e8f0" stroke-width="0.9"/></g>
<path d="M954.4 237.8h4.4l-2.2 2.6z" fill="#000"/>
<g transform="translate(943,248)"><path d="M1 1.2L6 2.4L8 4.4" stroke="#c0c0d0" stroke-width="0.9" fill="none"/><path d="M1.4 2.2L6 3.2" stroke="#f0f0f8" stroke-width="0.5"/></g>
<path d="M954.4 255.8h4.4l-2.2 2.6z" fill="#000"/>
<g transform="translate(941.5,261.5)"><path d="M5 4C6 1 10 0.6 12 2.4L10.4 4.4C9 3.4 7.4 3.8 7 5.4Z" fill="#d8d8e4" stroke="#b4b4c6" stroke-width="0.6"/><path d="M2 8C4 5.4 9 5.4 11.4 8L9 10C7.6 8.6 5.4 8.8 4.4 10.4Z" fill="#c8c8d8" stroke="#b0b0c2" stroke-width="0.6"/><path d="M1.4 11.6C4 9.8 9 9.8 12 11.4" stroke="#b8b8ca" stroke-width="1.4" fill="none"/></g>
<g transform="translate(941.5,277.5)"><path d="M3 2L6 0.8L10 4L8 5.6Z" fill="#e0e0ea" stroke="#b4b4c6" stroke-width="0.6"/><rect x="8.4" y="4.6" width="4" height="5.4" fill="#d0d0de" stroke="#b0b0c2" stroke-width="0.6"/><path d="M1 10.4C3 8.6 5 11.6 7 10.6C9 9.6 10 11.6 12.6 10.6" stroke="#b8b8ca" stroke-width="1.2" fill="none"/><path d="M1.6 11.6L4 9.6M5 12.4L7 10.4" stroke="#c4c4d2" stroke-width="0.6"/></g>
<g transform="translate(942.5,293.5)"><path d="M2.4 9.6L9.6 1.2" stroke="#c0c0d0" stroke-width="1.1"/><path d="M3.2 10L10.2 1.8" stroke="#f0f0f8" stroke-width="0.5"/><path d="M1.4 10.6L4 11" stroke="#c8c8d6" stroke-width="0.7"/></g>
<path d="M940 311.5h10" stroke="#fff" stroke-width="1.2"/><path d="M940.5 312.6h10" stroke="#a4a4b8" stroke-width="0.9"/>
<g transform="translate(943.5,319.5)"><path d="M1 0.6L1 11.4L3.8 9L5.8 13.4L7.8 12.4L5.8 8.2L9.4 8.2Z" fill="#f89838" stroke="#f8f0e0" stroke-width="0.7" stroke-linejoin="round"/><path d="M1.8 2.4L1.8 9.6L3.8 7.8" stroke="#e06010" stroke-width="0.6" fill="none"/></g>
<path d="M954.4 332.2h4.4l-2.2 2.6z" fill="#000"/>
<g transform="translate(946.5,340)"><path d="M0.4 0.4L3.8 3.4L0.4 6.6Z" fill="#101070"/><path d="M1 7.6L4.4 4.6" stroke="#b8b8cc" stroke-width="0.7"/></g>
<path d="M940 358h10" stroke="#fff" stroke-width="1.2"/><path d="M940.5 359.1h10" stroke="#a4a4b8" stroke-width="0.9"/>
<g transform="translate(941.5,365.5)"><path d="M3.2 1.6H12.4V10.6L11 12H0.8V4Z" fill="#f4f4fa" stroke="#202880" stroke-width="0.9" stroke-linejoin="round"/><path d="M0.8 12H11L12.4 10.6" fill="none" stroke="#202880" stroke-width="1.3"/><path d="M3 9C4 6.4 5.4 9.4 6.4 7.6" stroke="#30a060" stroke-width="0.8" fill="none"/><path d="M6 9.4L11.4 0.8L12.8 1.6L7.4 10.2Z" fill="#283890" stroke="#101040" stroke-width="0.4"/><path d="M6 9.4L5.8 11L7.4 10.2Z" fill="#181818"/></g>
<path d="M954.4 378.2h4.4l-2.2 2.6z" fill="#000"/>
<path d="M940 387h10" stroke="#fff" stroke-width="1.2"/><path d="M940.5 388.1h10" stroke="#a4a4b8" stroke-width="0.9"/>
<g transform="translate(941.5,394.5)"><path d="M1.4 6.6C1 2 6 0.4 9.4 2.6C11.6 4 11.6 6.4 10 7.6" stroke="#2060d8" stroke-width="2" fill="none"/><path d="M1.6 6.4C1.4 2.6 6 1.2 9 3" stroke="#70c8f8" stroke-width="0.6" fill="none"/><path d="M6.8 5.4L11.8 5L10.8 9.6Z" fill="#2060d8"/><text x="3.2" y="13.6" font-size="5.8" font-weight="bold" fill="#303030" letter-spacing="-0.2">x</text><text x="6.4" y="13.8" font-size="6.4" font-weight="bold" fill="#1828c8">N</text></g>
<path d="M954.4 408.2h4.4l-2.2 2.6z" fill="#000"/>
<g transform="translate(941.5,412.5)"><path d="M1 8L6 3.4L12.6 5.6L8 10.6Z" fill="#f4ec50" stroke="#383808" stroke-width="0.7" stroke-linejoin="round"/><path d="M1 8L8 10.6V13.4L1.4 10.8Z" fill="#908c20" stroke="#383808" stroke-width="0.6"/><path d="M8 10.6L12.6 5.6V8.6L8 13.4Z" fill="#c8c038" stroke="#383808" stroke-width="0.6"/><path d="M3 8L7.6 9.6M4.4 6.8L9 8.4M6 5.4L10.4 7" stroke="#807818" stroke-width="0.5"/><path d="M7 7.4L13 1" stroke="#2050e0" stroke-width="1.5"/><path d="M6.4 8.4L7.6 7" stroke="#181818" stroke-width="1"/></g>
<path d="M954.4 426.2h4.4l-2.2 2.6z" fill="#000"/>
</svg>
</body></html>
